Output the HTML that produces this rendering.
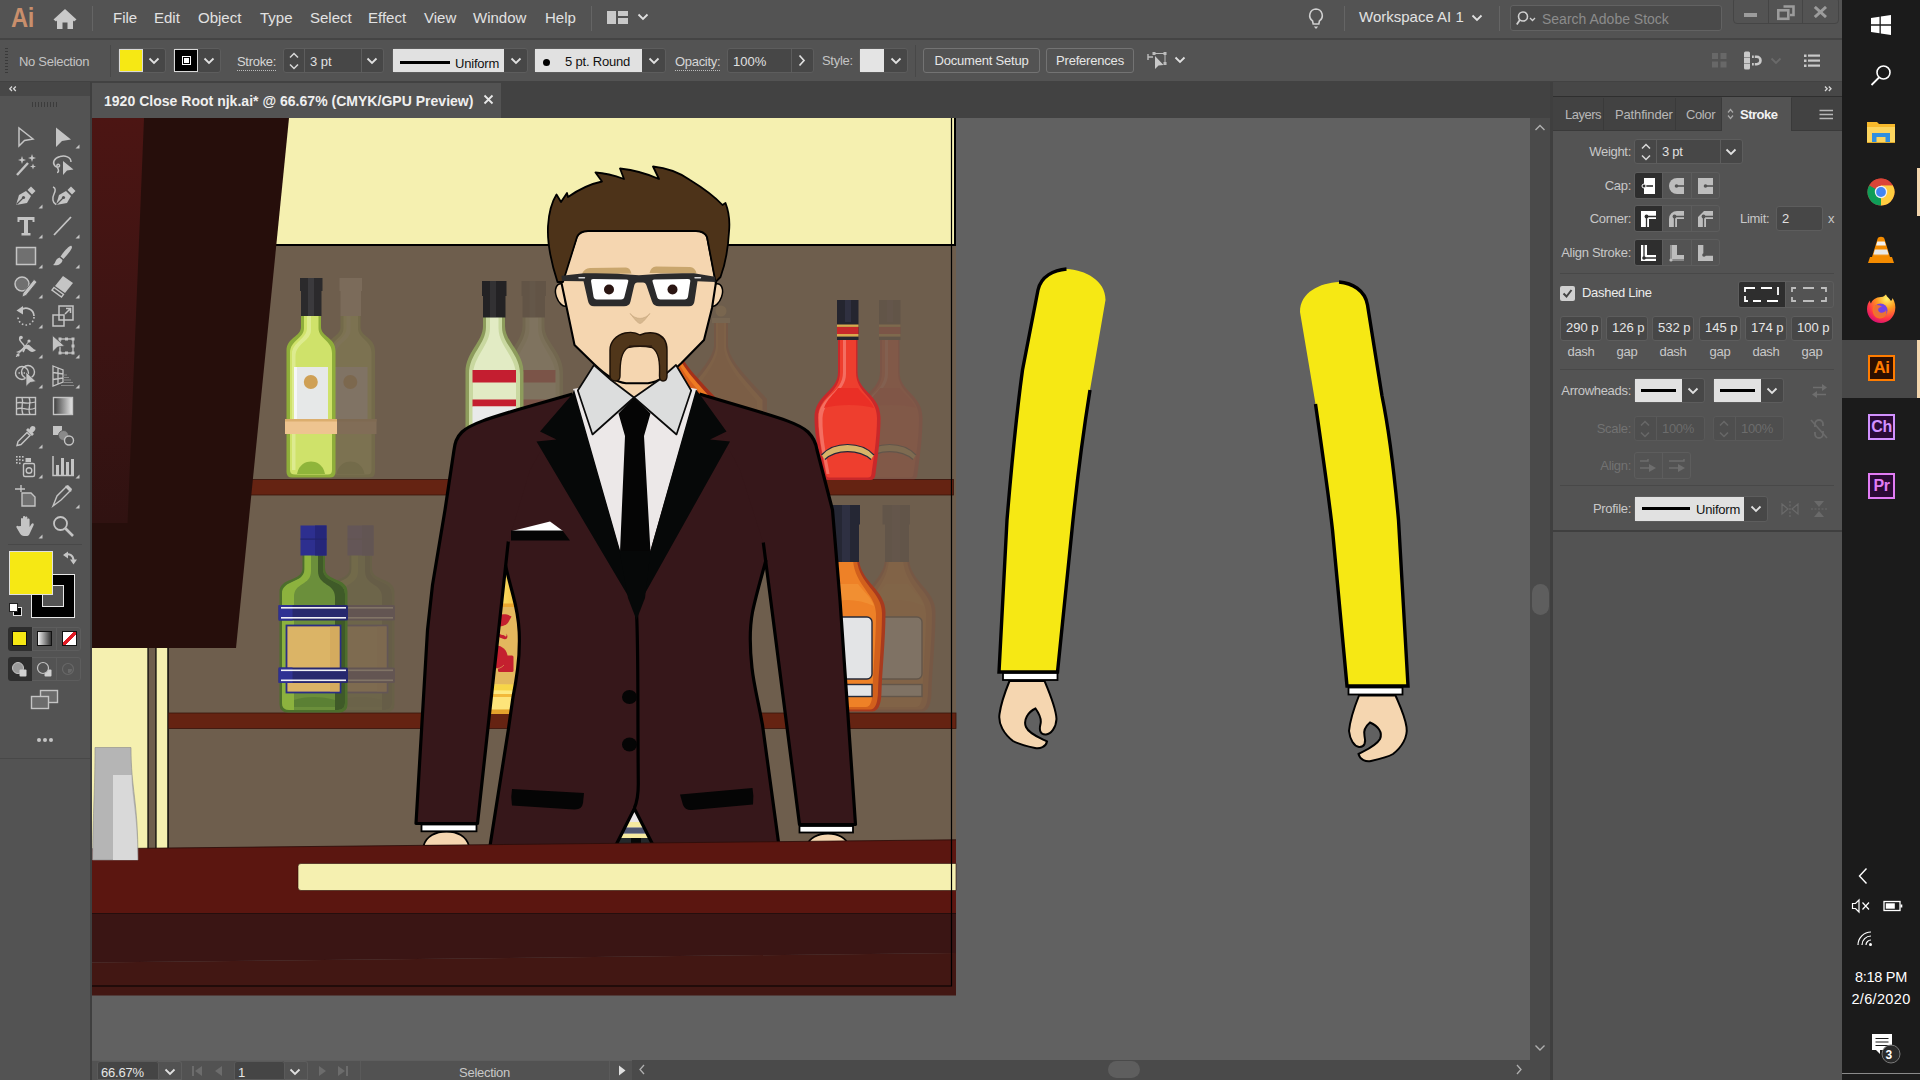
<!DOCTYPE html>
<html><head><meta charset="utf-8"><title>Illustrator</title>
<style>
*{box-sizing:border-box;margin:0;padding:0}
html,body{width:1920px;height:1080px;overflow:hidden;background:#535353;font-family:"Liberation Sans",sans-serif;font-size:13px;color:#dcdcdc}
.abs{position:absolute}
#menubar{position:absolute;left:0;top:0;width:1842px;height:38px;background:#535353}
#menuline{position:absolute;left:0;top:38px;width:1842px;height:2px;background:#444}
#ctrlbar{position:absolute;left:0;top:40px;width:1842px;height:41px;background:#535353}
#tabbar{position:absolute;left:0;top:81px;width:1842px;height:37px;background:#424242}
#ltool{position:absolute;left:0;top:82px;width:90px;height:998px;background:#535353}
#ltoolhead{position:absolute;left:0;top:82px;width:90px;height:14px;background:#474747}
#lgap{position:absolute;left:90px;top:82px;width:2px;height:998px;background:#3f3f3f}
#doctab{position:absolute;left:92px;top:83px;width:409px;height:35px;background:#535353}
#canvas{position:absolute;left:92px;top:118px;width:1438px;height:942px;background:#616161;overflow:hidden}
#vscroll{position:absolute;left:1530px;top:118px;width:20px;height:942px;background:#4a4a4a}
#rgap{position:absolute;left:1550px;top:82px;width:3px;height:998px;background:#3f3f3f}
#rpanel{position:absolute;left:1553px;top:82px;width:289px;height:998px;background:#535353}
#status{position:absolute;left:92px;top:1060px;width:1458px;height:20px;background:#4a4a4a}
#taskbar{position:absolute;left:1842px;top:0;width:78px;height:1080px;background:#1b1b1b}
.mi{position:absolute;top:8px;font-size:15px;color:#e2e2e2;line-height:20px;white-space:nowrap}
.t{position:absolute;white-space:nowrap;line-height:16px}
</style></head><body>
<!--MENUBAR-->
<div id="menubar">
<div class="t" style="left:11px;top:4px;font-size:27px;line-height:28px;font-weight:bold;color:#c98f6c;letter-spacing:-0.5px;transform:scaleX(0.88);transform-origin:0 0">Ai</div>
<svg class="abs" style="left:52px;top:8px" width="26" height="22" viewBox="0 0 26 22"><path d="M13 1 L1.5 11.5 L4 13.5 L5 12.6 V21 H10.5 V14.5 H15.5 V21 H21 V12.6 L22 13.5 L24.5 11.5 Z" fill="#c9c9c9"/></svg>
<div class="abs" style="left:92px;top:6px;width:1px;height:25px;background:#656565"></div>
<div class="mi" id="m1" style="left:113px">File</div>
<div class="mi" id="m2" style="left:154px">Edit</div>
<div class="mi" id="m3" style="left:198px">Object</div>
<div class="mi" id="m4" style="left:260px">Type</div>
<div class="mi" id="m5" style="left:310px">Select</div>
<div class="mi" id="m6" style="left:368px">Effect</div>
<div class="mi" id="m7" style="left:424px">View</div>
<div class="mi" id="m8" style="left:473px">Window</div>
<div class="mi" id="m9" style="left:545px">Help</div>
<div class="abs" style="left:591px;top:6px;width:1px;height:25px;background:#656565"></div>
<svg class="abs" style="left:607px;top:11px" width="22" height="14" viewBox="0 0 22 14"><rect x="0" y="0" width="9" height="13" fill="#c9c9c9"/><rect x="11" y="0" width="10" height="5" fill="#c9c9c9"/><rect x="11" y="7" width="10" height="6" fill="#c9c9c9"/></svg>
<svg class="abs" style="left:637px;top:13px" width="12" height="8" viewBox="0 0 12 8"><path d="M1.5 1.5 L6 6 L10.5 1.5" fill="none" stroke="#e0e0e0" stroke-width="1.8"/></svg>
<svg class="abs" style="left:1307px;top:7px" width="18" height="24" viewBox="0 0 18 24"><path d="M9 2 A6.5 6.5 0 0 0 5.5 13.8 L6.2 17 H11.8 L12.5 13.8 A6.5 6.5 0 0 0 9 2 Z" fill="none" stroke="#d0d0d0" stroke-width="1.6"/><path d="M6.8 19.5 H11.2 L9 22 Z" fill="#d0d0d0"/></svg>
<div class="abs" style="left:1344px;top:6px;width:1px;height:25px;background:#656565"></div>
<div class="mi" id="m10" style="left:1359px;top:7px">Workspace AI 1</div>
<svg class="abs" style="left:1471px;top:14px" width="12" height="8" viewBox="0 0 12 8"><path d="M1.5 1.5 L6 6 L10.5 1.5" fill="none" stroke="#e0e0e0" stroke-width="1.8"/></svg>
<div class="abs" style="left:1499px;top:6px;width:1px;height:25px;background:#656565"></div>
<div class="abs" style="left:1510px;top:5px;width:212px;height:26px;background:#4a4a4a;border:1px solid #626262;border-radius:3px"></div>
<svg class="abs" style="left:1516px;top:10px" width="22" height="16" viewBox="0 0 22 16"><circle cx="7" cy="6.5" r="4.5" fill="none" stroke="#d0d0d0" stroke-width="1.6"/><path d="M3.8 10 L0.8 14.5" stroke="#d0d0d0" stroke-width="1.8"/><path d="M14 8 L16.5 10.5 L19 8" fill="none" stroke="#d0d0d0" stroke-width="1.3"/></svg>
<div class="mi" id="m11" style="left:1542px;top:9px;font-size:14px;color:#8c8c8c">Search Adobe Stock</div>
<div class="abs" style="left:1733px;top:-3px;width:106px;height:27px;border:1px solid #454545;border-radius:4px"></div>
<div class="abs" style="left:1768px;top:0;width:1px;height:23px;background:#454545"></div>
<div class="abs" style="left:1802px;top:0;width:1px;height:23px;background:#454545"></div>
<div class="abs" style="left:1744px;top:13px;width:13px;height:4px;background:#9c9c9c"></div>
<svg class="abs" style="left:1776px;top:4px" width="20" height="17" viewBox="0 0 20 17"><path d="M7.500 2.500 H17.500 V11 H14" fill="none" stroke="#9c9c9c" stroke-width="2.600"/><rect x="2.300" y="6.300" width="10" height="8.500" fill="none" stroke="#9c9c9c" stroke-width="2.600"/></svg>
<svg class="abs" style="left:1813px;top:6px" width="15" height="12" viewBox="0 0 15 12"><path d="M1.800 1 L13 11 M13 1 L1.800 11" stroke="#9c9c9c" stroke-width="3"/></svg>
</div><div id="menuline"></div>
<!--CTRLBAR-->
<div id="ctrlbar">
<style>
#ctrlbar .t{top:14px;color:#c4c4c4;font-size:13px}
.dd{position:absolute;top:8px;height:25px;background:#474747;border:1px solid #5d5d5d;border-radius:3px}
.lt{position:absolute;top:9px;height:23px;background:#e1e1e1}
.btn{position:absolute;top:8px;height:25px;border:1px solid #737373;border-radius:3px;color:#e6e6e6;font-size:13px;line-height:24px;text-align:center;letter-spacing:-0.2px}
</style>
<div class="abs" style="left:5px;top:8px;width:3px;height:25px;background:repeating-linear-gradient(#3a3a3a 0 1px,transparent 1px 3px)"></div>
<div class="t" id="c1" style="left:19px;top:14px;letter-spacing:-0.3px">No Selection</div>
<div class="abs" style="left:110px;top:5px;width:1px;height:32px;background:#484848"></div>
<div class="dd" style="left:118px;width:48px"></div>
<div class="abs" style="left:119px;top:9px;width:24px;height:23px;background:#f6e814;border:1px solid #d8d8d8"></div>
<svg class="abs" style="left:148px;top:17px" width="12" height="8" viewBox="0 0 12 8"><path d="M1.5 1.5 L6 6 L10.5 1.5" fill="none" stroke="#e0e0e0" stroke-width="1.8"/></svg>
<div class="dd" style="left:173px;width:48px"></div>
<div class="abs" style="left:174px;top:9px;width:24px;height:23px;background:#000;border:1px solid #d8d8d8"></div>
<div class="abs" style="left:182px;top:16px;width:9px;height:9px;border:1px solid #fff;background:#000"><div style="position:absolute;left:1px;top:1px;width:5px;height:5px;background:#fff"></div></div>
<svg class="abs" style="left:203px;top:17px" width="12" height="8" viewBox="0 0 12 8"><path d="M1.5 1.5 L6 6 L10.5 1.5" fill="none" stroke="#e0e0e0" stroke-width="1.8"/></svg>
<div class="t" id="c2" style="left:237px;color:#d6d6d6;border-bottom:1px dotted #bbb;line-height:17px;top:13px;letter-spacing:-0.3px">Stroke:</div>
<div class="dd" style="left:283px;width:101px"></div>
<div class="abs" style="left:304px;top:9px;width:1px;height:23px;background:#5d5d5d"></div>
<div class="abs" style="left:361px;top:9px;width:1px;height:23px;background:#5d5d5d"></div>
<svg class="abs" style="left:288px;top:11px" width="12" height="20" viewBox="0 0 12 20"><path d="M2 6.5 L6 2.5 L10 6.5 M2 13.5 L6 17.5 L10 13.5" fill="none" stroke="#d8d8d8" stroke-width="1.5"/></svg>
<div class="t" style="left:310px;color:#e0e0e0">3 pt</div>
<svg class="abs" style="left:366px;top:17px" width="12" height="8" viewBox="0 0 12 8"><path d="M1.5 1.5 L6 6 L10.5 1.5" fill="none" stroke="#e0e0e0" stroke-width="1.8"/></svg>
<div class="dd" style="left:392px;width:136px"></div>
<div class="lt" style="left:393px;width:111px"></div>
<div class="abs" style="left:400px;top:20.5px;width:50px;height:3px;background:#000"></div>
<div class="t" id="c3" style="left:455px;color:#111;top:16px;letter-spacing:-0.2px">Uniform</div>
<svg class="abs" style="left:510px;top:17px" width="12" height="8" viewBox="0 0 12 8"><path d="M1.5 1.5 L6 6 L10.5 1.5" fill="none" stroke="#e0e0e0" stroke-width="1.8"/></svg>
<div class="dd" style="left:534px;width:132px"></div>
<div class="lt" style="left:535px;width:107px"></div>
<div class="abs" style="left:543px;top:19px;width:7px;height:7px;border-radius:50%;background:#000"></div>
<div class="t" id="c4" style="left:565px;color:#111;letter-spacing:-0.2px">5 pt. Round</div>
<svg class="abs" style="left:648px;top:17px" width="12" height="8" viewBox="0 0 12 8"><path d="M1.5 1.5 L6 6 L10.5 1.5" fill="none" stroke="#e0e0e0" stroke-width="1.8"/></svg>
<div class="t" id="c5" style="left:675px;color:#d6d6d6;border-bottom:1px dotted #bbb;line-height:17px;top:13px;letter-spacing:-0.3px">Opacity:</div>
<div class="dd" style="left:727px;width:87px"></div>
<div class="abs" style="left:791px;top:9px;width:1px;height:23px;background:#5d5d5d"></div>
<div class="t" style="left:733px;color:#e0e0e0">100%</div>
<svg class="abs" style="left:798px;top:14px" width="8" height="13" viewBox="0 0 8 13"><path d="M1.5 1.5 L6 6.5 L1.5 11.5" fill="none" stroke="#e0e0e0" stroke-width="1.7"/></svg>
<div class="t" id="c6" style="left:822px;top:13px;letter-spacing:-0.3px">Style:</div>
<div class="dd" style="left:859px;width:49px"></div>
<div class="lt" style="left:860px;width:24px;background:#e4e4e4"></div>
<svg class="abs" style="left:890px;top:17px" width="12" height="8" viewBox="0 0 12 8"><path d="M1.5 1.5 L6 6 L10.5 1.5" fill="none" stroke="#e0e0e0" stroke-width="1.8"/></svg>
<div class="abs" style="left:915px;top:5px;width:1px;height:32px;background:#484848"></div>
<div class="btn" id="c7" style="left:923px;width:117px">Document Setup</div>
<div class="btn" id="c8" style="left:1046px;width:88px">Preferences</div>
<svg class="abs" style="left:1146px;top:9px" width="24" height="22" viewBox="0 0 24 22"><path d="M2 5 V11 M2 8 H7" stroke="#bdbdbd" stroke-width="1.4" fill="none"/><rect x="6.5" y="3" width="3" height="3" fill="#bdbdbd"/><rect x="17.5" y="3" width="3" height="3" fill="#bdbdbd"/><rect x="17.5" y="13" width="3" height="3" fill="#bdbdbd"/><path d="M8 4.5 H19 V14.5" stroke="#bdbdbd" stroke-width="1" fill="none"/><path d="M9 7 L9 20 L12.5 16.5 L17.5 16 Z" fill="#c9c9c9"/></svg>
<svg class="abs" style="left:1174px;top:16px" width="12" height="8" viewBox="0 0 12 8"><path d="M1.5 1.5 L6 6 L10.5 1.5" fill="none" stroke="#e0e0e0" stroke-width="1.8"/></svg>
<svg class="abs" style="left:1711px;top:12px" width="17" height="17" viewBox="0 0 17 17"><g fill="#686868"><rect x="1" y="1" width="6" height="6"/><rect x="9.5" y="1" width="6" height="6"/><rect x="1" y="9.5" width="6" height="6"/><rect x="9.5" y="9.5" width="6" height="6"/></g></svg>
<svg class="abs" style="left:1743px;top:10px" width="21" height="21" viewBox="0 0 21 21"><rect x="1" y="1.500" width="6" height="18" rx="1.500" fill="#c9c9c9"/><rect x="1" y="7" width="6" height="1" fill="#8d8d8d"/><rect x="1" y="13" width="6" height="1" fill="#8d8d8d"/><path d="M9 6.800 H13.800 A3.700 3.700 0 0 1 13.800 14.200 H9" fill="none" stroke="#c9c9c9" stroke-width="2.600"/><rect x="10.800" y="5" width="1" height="11" fill="#535353"/></svg>
<svg class="abs" style="left:1770px;top:17px" width="12" height="8" viewBox="0 0 12 8"><path d="M1.5 1.5 L6 6 L10.5 1.5" fill="none" stroke="#6a6a6a" stroke-width="1.8"/></svg>
<svg class="abs" style="left:1803px;top:13px" width="18" height="15" viewBox="0 0 18 15"><g fill="#c9c9c9"><rect x="1" y="1.5" width="2.5" height="2.5"/><rect x="5" y="1.5" width="12" height="2.2"/><rect x="1" y="6.5" width="2.5" height="2.5"/><rect x="5" y="6.5" width="12" height="2.2"/><rect x="1" y="11.5" width="2.5" height="2.5"/><rect x="5" y="11.5" width="12" height="2.2"/></g></svg>
</div>
<!--TABBAR-->
<div id="tabbar"></div>
<div id="doctab">
<div class="t" id="d1" style="left:12px;top:10px;font-weight:bold;font-size:14px;color:#efefef;letter-spacing:0.02px">1920 Close Root njk.ai* @ 66.67% (CMYK/GPU Preview)</div>
<svg class="abs" style="left:391px;top:11px" width="11" height="11" viewBox="0 0 11 11"><path d="M1.5 1.5 L9.5 9.5 M9.5 1.5 L1.5 9.5" stroke="#e8e8e8" stroke-width="1.8"/></svg>
</div>
<!--CANVAS-->
<div id="canvas"><!--ART0--><svg width="1438" height="942" viewBox="92 118 1438 942" style="position:absolute;left:0;top:0">
<defs>
<linearGradient id="wallg" x1="0" y1="0" x2="0" y2="1"><stop offset="0" stop-color="#4c1513"/><stop offset="0.55" stop-color="#3c1413"/><stop offset="1" stop-color="#301211"/></linearGradient>
<clipPath id="cv"><rect x="92" y="118" width="1438" height="942"/></clipPath>
</defs>
<rect x="92" y="118" width="864" height="730" fill="#6e5e4d"/>
<path d="M275 110 H955 V245 H262 Z" fill="#f5f0b0" stroke="#000" stroke-width="2"/>
<rect x="92" y="640" width="76" height="210" fill="#f5f0b0"/>
<rect x="148" y="640" width="8" height="210" fill="#6e5e4d" stroke="#000" stroke-width="1.200"/>
<path d="M168 640 V850" stroke="#000" stroke-width="1.400"/>
<rect x="245" y="479.500" width="708.500" height="15.500" fill="#652312" stroke="#3a140c" stroke-width="0.800"/>
<rect x="168.500" y="713" width="787.500" height="15.500" fill="#652312" stroke="#3a140c" stroke-width="0.800"/>
<path d="M92 118 H289 L236 648 H92 Z" fill="#260e0b"/>
<path d="M92 118 H144 L127.500 523 H92 Z" fill="url(#wallg)"/>
<g transform="translate(39.5,0)" opacity="0.15"><path d="M301 316 H321 V327 C321 337 335.500 337 335.500 351 V472 Q335.500 477.500 330 477.500 H292 Q286.500 477.500 286.500 472 V351 C286.500 337 301 337 301 327 Z" fill="#8fae3a"/><path d="M304 316 H318.500 V328 C318.500 339 332 340 332 353 V470 Q332 474.500 328 474.500 H295 Q290 474.500 290 470 V353 C290 340 304 339 304 328 Z" fill="#cfe26a"/><path d="M307 316 H311 V330 C311 341 296 343 295.500 356 V470 H292 V354 C292 342 307 339 307 328 Z" fill="#e3efa0" opacity="0.700"/><path d="M297 474 C299 464 306 461.500 311 461.500 C316 461.500 323 464 325 474 Z" fill="#8fb53a"/><rect x="294" y="367" width="34" height="52" fill="#e6e8e8"/><rect x="294" y="367" width="3" height="52" fill="#f6f7f7"/><circle cx="310.800" cy="382" r="7" fill="#cfa055"/><rect x="285" y="419" width="52" height="15" fill="#eec490"/><rect x="285" y="419" width="52" height="2.500" fill="#dcae6e"/><path d="M300 278 H322.500 V291 H321.500 V316 H301 V291 H300 Z" fill="#c8b8a8"/><rect x="308" y="278" width="6" height="38" fill="#c8b8a8"/></g>
<g transform="translate(0,0)" opacity="1"><path d="M301 316 H321 V327 C321 337 335.500 337 335.500 351 V472 Q335.500 477.500 330 477.500 H292 Q286.500 477.500 286.500 472 V351 C286.500 337 301 337 301 327 Z" fill="#8fae3a"/><path d="M304 316 H318.500 V328 C318.500 339 332 340 332 353 V470 Q332 474.500 328 474.500 H295 Q290 474.500 290 470 V353 C290 340 304 339 304 328 Z" fill="#cfe26a"/><path d="M307 316 H311 V330 C311 341 296 343 295.500 356 V470 H292 V354 C292 342 307 339 307 328 Z" fill="#e3efa0" opacity="0.700"/><path d="M297 474 C299 464 306 461.500 311 461.500 C316 461.500 323 464 325 474 Z" fill="#8fb53a"/><rect x="294" y="367" width="34" height="52" fill="#e6e8e8"/><rect x="294" y="367" width="3" height="52" fill="#f6f7f7"/><circle cx="310.800" cy="382" r="7" fill="#cfa055"/><rect x="285" y="419" width="52" height="15" fill="#eec490"/><rect x="285" y="419" width="52" height="2.500" fill="#dcae6e"/><path d="M300 278 H322.500 V291 H321.500 V316 H301 V291 H300 Z" fill="#2b2a2c"/><rect x="308" y="278" width="6" height="38" fill="#3b3a3d"/></g>
<g transform="translate(39.5,0)" opacity="0.15"><path d="M483 317 H505 V326 C505 342 523.500 352 523.500 372 V478 H465.500 V372 C465.500 352 483 342 483 326 Z" fill="#8d9c5c"/><path d="M486 317 H502 V327 C502 344 520 354 520 374 V478 H469 V374 C469 354 486 344 486 327 Z" fill="#c9d8a0"/><path d="M490 317 H498.500 V328 C498.500 346 516 356 516 376 V478 H473 V376 C473 356 490 346 490 328 Z" fill="#e2ebc4"/><rect x="472.500" y="370" width="43.500" height="12.500" fill="#c41e30"/><rect x="472.500" y="399.500" width="43.500" height="7" fill="#c41e30"/><rect x="472.500" y="406.500" width="43.500" height="40" fill="#e9eaea"/><path d="M482 281 H506.500 V296 H505.500 V317.500 H483 V296 H482 Z" fill="#232224"/><rect x="490" y="281" width="6" height="36" fill="#323133"/></g>
<g transform="translate(0,0)" opacity="1"><path d="M483 317 H505 V326 C505 342 523.500 352 523.500 372 V478 H465.500 V372 C465.500 352 483 342 483 326 Z" fill="#8d9c5c"/><path d="M486 317 H502 V327 C502 344 520 354 520 374 V478 H469 V374 C469 354 486 344 486 327 Z" fill="#c9d8a0"/><path d="M490 317 H498.500 V328 C498.500 346 516 356 516 376 V478 H473 V376 C473 356 490 346 490 328 Z" fill="#e2ebc4"/><rect x="472.500" y="370" width="43.500" height="12.500" fill="#c41e30"/><rect x="472.500" y="399.500" width="43.500" height="7" fill="#c41e30"/><rect x="472.500" y="406.500" width="43.500" height="40" fill="#e9eaea"/><path d="M482 281 H506.500 V296 H505.500 V317.500 H483 V296 H482 Z" fill="#232224"/><rect x="490" y="281" width="6" height="36" fill="#323133"/></g>
<g transform="translate(50,0)" opacity="0.12"><path d="M664 322 H678 V346 C680 362 700 380 717 399 V478 H625 V399 C642 380 662 362 664 346 Z" fill="#a3311a"/><path d="M666 322 H676 V347 C678 364 697 382 712.500 400 V478 H629.500 V400 C645 382 664 364 666 347 Z" fill="#ee7a22"/><path d="M668 322 H674 V348 C676 366 693 384 707 401 V478 H635 V401 C649 384 666 366 668 348 Z" fill="#d9601c"/><rect x="662" y="318" width="18" height="5" fill="#b9a27a"/><circle cx="671" cy="311" r="5.500" fill="#c9a55e"/></g>
<g transform="translate(0,0)" opacity="1"><path d="M664 322 H678 V346 C680 362 700 380 717 399 V478 H625 V399 C642 380 662 362 664 346 Z" fill="#a3311a"/><path d="M666 322 H676 V347 C678 364 697 382 712.500 400 V478 H629.500 V400 C645 382 664 364 666 347 Z" fill="#ee7a22"/><path d="M668 322 H674 V348 C676 366 693 384 707 401 V478 H635 V401 C649 384 666 366 668 348 Z" fill="#d9601c"/><rect x="662" y="318" width="18" height="5" fill="#b9a27a"/><circle cx="671" cy="311" r="5.500" fill="#c9a55e"/></g>
<g transform="translate(42,0)" opacity="0.15"><path d="M838 338 H857.500 V372 C857.500 392 880.500 394 880.500 418 C880.500 440 877 462 875.500 474 Q875 480 870 480 H828 Q823.500 480 823 474 C821 462 814.500 440 814.500 418 C814.500 394 838 392 838 372 Z" fill="#c8282a"/><path d="M840 338 H856 V372 C856 394 877 396 877 418 C877 440 873 462 871.500 474 Q871 477.500 868 477.500 H829 Q826.500 477.500 826 474 C824 462 818 440 818 418 C818 396 840 394 840 372 Z" fill="#ee3e2e"/><path d="M843 340 H846 V374 C846 392 824 398 822.500 418 C822 440 828 462 829.500 474 H826.500 C824.500 462 818.500 440 818.500 418 C818.500 396 843 394 843 372 Z" fill="#f4776a" opacity="0.850"/><path d="M824 408 C838 404 860 404 874 408 C870 399 862 394 858 388 H838 C834 394 827 399 824 408 Z" fill="#ea2f26"/><path d="M821.500 455 C834 441 861 441 874 455 L871 459.500 C859 449 836 449 825 459.500 Z" fill="#d8b468"/><path d="M821.500 455 C834 441 861 441 874 455" fill="none" stroke="#23263a" stroke-width="1.200"/><path d="M825 459.500 C836 449 859 449 871 459.500" fill="none" stroke="#23263a" stroke-width="1.200"/><rect x="837" y="300" width="21.500" height="40" fill="#24252f"/><rect x="845" y="300" width="6" height="22" fill="#2f3040"/><rect x="837" y="324.500" width="21.500" height="2.400" fill="#d9a94e"/><rect x="837" y="334" width="21.500" height="2.600" fill="#d9a94e"/><rect x="837" y="327" width="21.500" height="7" fill="#c8282a"/></g>
<g transform="translate(0,0)" opacity="1"><path d="M838 338 H857.500 V372 C857.500 392 880.500 394 880.500 418 C880.500 440 877 462 875.500 474 Q875 480 870 480 H828 Q823.500 480 823 474 C821 462 814.500 440 814.500 418 C814.500 394 838 392 838 372 Z" fill="#c8282a"/><path d="M840 338 H856 V372 C856 394 877 396 877 418 C877 440 873 462 871.500 474 Q871 477.500 868 477.500 H829 Q826.500 477.500 826 474 C824 462 818 440 818 418 C818 396 840 394 840 372 Z" fill="#ee3e2e"/><path d="M843 340 H846 V374 C846 392 824 398 822.500 418 C822 440 828 462 829.500 474 H826.500 C824.500 462 818.500 440 818.500 418 C818.500 396 843 394 843 372 Z" fill="#f4776a" opacity="0.850"/><path d="M824 408 C838 404 860 404 874 408 C870 399 862 394 858 388 H838 C834 394 827 399 824 408 Z" fill="#ea2f26"/><path d="M821.500 455 C834 441 861 441 874 455 L871 459.500 C859 449 836 449 825 459.500 Z" fill="#d8b468"/><path d="M821.500 455 C834 441 861 441 874 455" fill="none" stroke="#23263a" stroke-width="1.200"/><path d="M825 459.500 C836 449 859 449 871 459.500" fill="none" stroke="#23263a" stroke-width="1.200"/><rect x="837" y="300" width="21.500" height="40" fill="#24252f"/><rect x="845" y="300" width="6" height="22" fill="#2f3040"/><rect x="837" y="324.500" width="21.500" height="2.400" fill="#d9a94e"/><rect x="837" y="334" width="21.500" height="2.600" fill="#d9a94e"/><rect x="837" y="327" width="21.500" height="7" fill="#c8282a"/></g>
<g transform="translate(47,0)" opacity="0.15"><path d="M302.500 553 H325 V568 C325 582 347.500 577 347.500 592 V704 Q347.500 712.500 339 712.500 H288 Q279.500 712.500 279.500 704 V592 C279.500 577 302.500 582 302.500 568 Z" fill="#4d6e2c"/><path d="M304.500 553 H323 V569 C323 584 345 579 345 594 V703 Q345 710 338 710 H289 Q282 710 282 703 V594 C282 579 304.500 584 304.500 569 Z" fill="#6b8f3b"/><path d="M304.500 553 H311 V571 C311 586 294 582 294 597 V710 H289 Q282 710 282 703 V594 C282 579 304.500 584 304.500 569 Z" fill="#8cb23e"/><path d="M318 553 H323 V569 C323 584 345 579 345 594 V703 Q345 710 338 710 H335 V597 C335 583 318 586 318 571 Z" fill="#3f5a28"/><path d="M294 700 C305 696 322 696 335 700 V707 H294 Z" fill="#587c33" opacity="0.800"/><rect x="286.500" y="625.500" width="54" height="67" fill="#dbb466" stroke="#2a2d86" stroke-width="1.800"/><rect x="330" y="626.500" width="9.500" height="65" fill="#cfa558" opacity="0.600"/><rect x="278.500" y="605" width="69.500" height="15.500" rx="1.500" fill="#27286e"/><rect x="278.500" y="605" width="14" height="15.500" fill="#2f3193"/><rect x="281" y="607" width="65" height="1.600" fill="#f0f0f4"/><rect x="281" y="617" width="65" height="1.600" fill="#f0f0f4"/><rect x="278.500" y="667.5" width="69.500" height="15.500" rx="1.500" fill="#27286e"/><rect x="278.500" y="667.5" width="14" height="15.500" fill="#2f3193"/><rect x="281" y="669.5" width="65" height="1.600" fill="#f0f0f4"/><rect x="281" y="679.5" width="65" height="1.600" fill="#f0f0f4"/><rect x="300.500" y="525.500" width="26" height="30" fill="#2d2f8f"/><rect x="315" y="525.500" width="11.500" height="30" fill="#25267a"/><rect x="300.500" y="538.500" width="26" height="1.200" fill="#23246c"/></g>
<g transform="translate(0,0)" opacity="1"><path d="M302.500 553 H325 V568 C325 582 347.500 577 347.500 592 V704 Q347.500 712.500 339 712.500 H288 Q279.500 712.500 279.500 704 V592 C279.500 577 302.500 582 302.500 568 Z" fill="#4d6e2c"/><path d="M304.500 553 H323 V569 C323 584 345 579 345 594 V703 Q345 710 338 710 H289 Q282 710 282 703 V594 C282 579 304.500 584 304.500 569 Z" fill="#6b8f3b"/><path d="M304.500 553 H311 V571 C311 586 294 582 294 597 V710 H289 Q282 710 282 703 V594 C282 579 304.500 584 304.500 569 Z" fill="#8cb23e"/><path d="M318 553 H323 V569 C323 584 345 579 345 594 V703 Q345 710 338 710 H335 V597 C335 583 318 586 318 571 Z" fill="#3f5a28"/><path d="M294 700 C305 696 322 696 335 700 V707 H294 Z" fill="#587c33" opacity="0.800"/><rect x="286.500" y="625.500" width="54" height="67" fill="#dbb466" stroke="#2a2d86" stroke-width="1.800"/><rect x="330" y="626.500" width="9.500" height="65" fill="#cfa558" opacity="0.600"/><rect x="278.500" y="605" width="69.500" height="15.500" rx="1.500" fill="#27286e"/><rect x="278.500" y="605" width="14" height="15.500" fill="#2f3193"/><rect x="281" y="607" width="65" height="1.600" fill="#f0f0f4"/><rect x="281" y="617" width="65" height="1.600" fill="#f0f0f4"/><rect x="278.500" y="667.5" width="69.500" height="15.500" rx="1.500" fill="#27286e"/><rect x="278.500" y="667.5" width="14" height="15.500" fill="#2f3193"/><rect x="281" y="669.5" width="65" height="1.600" fill="#f0f0f4"/><rect x="281" y="679.5" width="65" height="1.600" fill="#f0f0f4"/><rect x="300.500" y="525.500" width="26" height="30" fill="#2d2f8f"/><rect x="315" y="525.500" width="11.500" height="30" fill="#25267a"/><rect x="300.500" y="538.500" width="26" height="1.200" fill="#23246c"/></g>
<g transform="translate(50,0)" opacity="0.15"><path d="M835 560 H859 C861 582 885.500 590 885.500 612 C885.500 640 882 672 881.500 692 Q881 711.500 872 711.500 H822 Q813 711.500 812.500 692 C812 672 808.500 640 808.500 612 C808.500 590 833 582 835 560 Z" fill="#a83a1e"/><path d="M837 560 H857 C859 584 882 592 882 613 C882 640 878.500 672 878 692 Q877.500 709.500 870 709.500 H824 Q816.500 709.500 816 692 C815.500 672 812 640 812 613 C812 592 835 584 837 560 Z" fill="#d2601c"/><path d="M839 560 H853 C855 586 876 594 876 614 C876 640 873 672 872.500 692 Q872 707 866 707 H828 Q822 707 821.500 692 C821 672 818 640 818 614 C818 594 837 586 839 560 Z" fill="#ee8127"/><path d="M820 606 C836 598 858 598 874 606 C872 598 862 590 858 584 H836 C832 590 822 598 820 606 Z" fill="#f49a3a" opacity="0.600"/><rect x="822" y="617" width="50" height="62" rx="5" fill="#e3e4e6" stroke="#262a3a" stroke-width="1.400"/><rect x="824" y="684.500" width="48" height="12" fill="#e3e4e6" stroke="#262a3a" stroke-width="1.400"/><path d="M832.500 505 H860 V524.500 H859 V562 H835 V524.500 H832.500 Z" fill="#252734"/><rect x="842" y="505" width="8" height="57" fill="#2e3042"/></g>
<g transform="translate(0,0)" opacity="1"><path d="M835 560 H859 C861 582 885.500 590 885.500 612 C885.500 640 882 672 881.500 692 Q881 711.500 872 711.500 H822 Q813 711.500 812.500 692 C812 672 808.500 640 808.500 612 C808.500 590 833 582 835 560 Z" fill="#a83a1e"/><path d="M837 560 H857 C859 584 882 592 882 613 C882 640 878.500 672 878 692 Q877.500 709.500 870 709.500 H824 Q816.500 709.500 816 692 C815.500 672 812 640 812 613 C812 592 835 584 837 560 Z" fill="#d2601c"/><path d="M839 560 H853 C855 586 876 594 876 614 C876 640 873 672 872.500 692 Q872 707 866 707 H828 Q822 707 821.500 692 C821 672 818 640 818 614 C818 594 837 586 839 560 Z" fill="#ee8127"/><path d="M820 606 C836 598 858 598 874 606 C872 598 862 590 858 584 H836 C832 590 822 598 820 606 Z" fill="#f49a3a" opacity="0.600"/><rect x="822" y="617" width="50" height="62" rx="5" fill="#e3e4e6" stroke="#262a3a" stroke-width="1.400"/><rect x="824" y="684.500" width="48" height="12" fill="#e3e4e6" stroke="#262a3a" stroke-width="1.400"/><path d="M832.500 505 H860 V524.500 H859 V562 H835 V524.500 H832.500 Z" fill="#252734"/><rect x="842" y="505" width="8" height="57" fill="#2e3042"/></g>
<g><defs><linearGradient id="b6g" x1="0" x2="1"><stop offset="0" stop-color="#f5c23a"/><stop offset="0.550" stop-color="#fde56c"/><stop offset="1" stop-color="#f0b93a"/></linearGradient></defs><rect x="470" y="560" width="50" height="154" fill="url(#b6g)"/><rect x="470" y="603.500" width="50" height="4" fill="#e9a630"/><rect x="470" y="607" width="50" height="77.500" fill="#e3b85e"/><path d="M488 626.500 C491 615 504 611.500 511.500 616.500 L508.500 622 C506 626.500 498 627.500 488 626.500 Z" fill="#c4202f"/><path d="M497 631.500 C500 636 503 634 505 636 C506 637.500 507 636 506.500 633.500 C508.500 637 507 640 504 639 C501 638 499 638 497 634 Z" fill="#c4202f"/><circle cx="496" cy="657" r="11.500" fill="#c4202f"/><rect x="498" y="655.500" width="15.500" height="16.500" rx="1.500" fill="#c4202f"/><path d="M486 663 A11 11 0 0 0 504 665" fill="none" stroke="#e3b85e" stroke-width="0.600"/><rect x="470" y="684.500" width="50" height="6" fill="#f7d548"/><rect x="470" y="690.500" width="50" height="3.500" fill="#fde980"/><rect x="470" y="694" width="50" height="3" fill="#f2b93a"/><rect x="470" y="697" width="50" height="12.500" fill="#fde47a"/><rect x="470" y="709.500" width="50" height="4.500" fill="#e5a22c"/></g>
<path d="M423.500 846 C426 836 436 831.500 446.500 831.500 C457 831.500 466.500 836 469 846 Z" fill="#f5d6b0" stroke="#000" stroke-width="1.800"/>
<path d="M806.500 846 C809 838 818 833.500 828 833.500 C838 833.500 846.500 838 849 846 Z" fill="#f5d6b0" stroke="#000" stroke-width="1.800"/>
<rect x="421.500" y="824.500" width="55" height="6.800" fill="#fff" stroke="#000" stroke-width="1.800"/>
<rect x="799.500" y="826" width="53.500" height="6.500" fill="#fff" stroke="#000" stroke-width="1.800"/>
<path d="M572.500 394 L520 409 L507 470 L508.300 542 L505.500 565 C508 577 511 587 513 595 C516 606 518.500 618 519.200 632 C519.800 646 519 658 517.600 669 C516 682 514 692 513 697 L508.300 730 L490 846 L615 846 L634.400 808 L654 846 L779 846 L762.500 725 C758 700 754 686 752 668 C750 650 749.500 628 752.500 612 C756 595 762 575 766 560 L763.300 543 L766 470 L750 409 L699.500 394 Z" fill="#36171a"/><path d="M572.500 394 L520 409 C490 418 470 424 462 432 C456 438 455 443 454 450 L445 510 L432.500 585 L427.500 630 L416 823.500 H477.500 L508.300 542 L530 470 Z" fill="#36171a"/><path d="M699.500 394 L750 409 C780 418 800 424 808 432 C814 438 816 443 817 450 L832.500 510 L840 600 L855.500 824.500 H799.500 L763.300 543 L740 470 Z" fill="#36171a"/>
<path d="M634.400 808 L615 846 H654 Z" fill="#ece8e8"/>
<path d="M627.500 822 H641.300 L644.200 827.400 H624.700 Z" fill="#f6eaa0"/>
<path d="M624.700 827.400 H644.200 L647.400 833.700 H621.500 Z" fill="#4f5672"/>
<path d="M621.500 833.700 H647.400 L649.700 838 H619.300 Z" fill="#f6eaa0"/>
<path d="M619.300 838 H649.700 L654 846 H615 Z" fill="#24282b"/>
<rect x="631" y="838" width="10" height="8" fill="#060808"/>
<path d="M572.500 394 L520 409 C490 418 470 424 462 432 C456 438 455 443 454 450 L445 510 L432.500 585 L427.500 630 L416 823.500 H477.500 L508.300 541.500" fill="none" stroke="#000" stroke-width="3.2" stroke-linejoin="round"/>
<path d="M505.500 565 C508 577 511 587 513 595 C516 606 518.500 618 519.200 632 C519.800 646 519 658 517.600 669 C516 682 514 692 513 697 L508.300 730 L490 846" fill="none" stroke="#000" stroke-width="3.2" stroke-linejoin="round"/>
<path d="M699.500 394 L750 409 C780 418 800 424 808 432 C814 438 816 443 817 450 L832.500 510 L840 600 L855.500 824.500 H799.500 L763.300 542.500" fill="none" stroke="#000" stroke-width="3.2" stroke-linejoin="round"/>
<path d="M766 560 C762 575 756 595 752.500 612 C749.500 628 750 650 752 668 C754 686 758 700 762.500 725 L779 846" fill="none" stroke="#000" stroke-width="3.2" stroke-linejoin="round"/>
<path d="M615.500 846 L634.400 808.500 L653.500 846" fill="none" stroke="#000" stroke-width="3.2" stroke-linejoin="round"/>
<path d="M636.500 612 C638.500 650 637.500 700 638.300 784 C638.300 796 637 802 634.400 808" fill="none" stroke="#000" stroke-width="3.2"/>
<ellipse cx="629.500" cy="697" rx="7.500" ry="7" fill="#050505"/>
<ellipse cx="629.500" cy="744.500" rx="7.500" ry="7" fill="#050505"/>
<path d="M512 789 L584 793 L583 803 Q582 810 574 809.500 L512 805.500 Q510.500 797 512 789 Z" fill="#050505"/>
<path d="M752.500 788 L680 794.500 L683 805 Q685 810.500 692 810 L753 804.500 Q754 796 752.500 788 Z" fill="#050505"/>
<path d="M512 531 L550 521.500 L563 531 Z" fill="#fff"/>
<path d="M511 530.500 H562.500 L570 540.500 H511 Z" fill="#050505"/>
<path d="M573 389 L620 552 L650 552 L697 389 L634 378 Z" fill="#ece8e8"/>
<path d="M634 397 L650.500 413.500 L644 436 L650.500 552 L636 600 L620 552 L625 436 L618.500 413.500 Z" fill="#050505"/>
<path d="M572.500 394 L540 431.500 L556.500 439.500 L536.500 441.500 L634 606 L620.500 552 L574 389.500 Z" fill="#060808"/>
<path d="M699.500 394 L726.500 431.500 L710 439.500 L730 441.500 L638 606 L650 552 L696 389.500 Z" fill="#060808"/>
<path d="M619.500 551 L650.500 551 L645 598 L636.500 620 L628 598 Z" fill="#060808"/>
<path d="M606 360 H664 V385 L634 398 L606 385 Z" fill="#f5d6b0"/>
<path d="M563 284 C556 282 554 290 556.500 297 C558.500 303 563 307 566 306 Z" fill="#f5d6b0" stroke="#000" stroke-width="1.500"/>
<path d="M715 284 C722 282 724 290 721.500 297 C719.500 303 715 307 712 306 Z" fill="#f5d6b0" stroke="#000" stroke-width="1.500"/>
<path d="M577 236 Q580 231 588 231 H696 Q704 231 707 236 L716 282 L712 308 L704 340 L681 363.500 Q662 381.500 648 383.300 H626 Q612 381.500 594 364 L574.500 345 L569.500 321 L561.500 283 Z" fill="#f5d6b0" stroke="#000" stroke-width="2.100" stroke-linejoin="round"/>
<path d="M557.500 282 C551 262 547 245 548 226 C549 210 553 200 556.500 194.500 L561 202 L567 193 L568 197 C578 190 590 184 602 181.500 L595.500 172.500 C606 173 616 176 624 179 L620 168.500 C633 170 648 174 659 179 L653 166.500 C668 168 680 173 690 180 C703 188 715 197 722.500 205 L725.500 203 C729 212 730 222 729 232 C728 250 725 265 720.500 277 L715.500 282 L707 237 Q704 231 696 231 H588 Q580 231 577 237 L563 282 Z" fill="#4d3319" stroke="#000" stroke-width="1.800" stroke-linejoin="round"/>
<path d="M582 274.500 Q584 268 590 268 L626 267.500 Q630 267.500 631.500 273.500 Z" fill="#c9a66d"/>
<path d="M649.500 273 Q651 266.500 656 266.500 L690 267 Q695 267 696.500 273.500 Z" fill="#c9a66d"/>
<path d="M561.500 275.800 L584 273.300 Q612 272.600 639 275.300 Q666 272.600 694 273.300 L715 276.800 L715.500 282 L697.500 281.300 L694.500 301 Q694 306.300 689 306.300 L659 306.300 Q653.500 306.300 652 301.500 L646.500 285.500 Q645.500 282.500 643 282.500 L637.500 282.500 Q635 282.500 634.200 285.500 L630.500 301.500 Q629.500 306.300 624 306.300 L594 306.300 Q589 306.300 588 301 L583.500 281.300 L562 281 Z" fill="#2b2b2c"/>
<path d="M591 281 Q590.800 279 593 279 L626.500 279.500 Q628.800 279.500 628.200 281.800 L624.500 296.500 Q624 299.500 621 299.500 L597 299.500 Q594 299.500 593.500 296.500 Z" fill="#fff"/>
<path d="M652.600 281.800 Q652 279.500 654.300 279.500 L688 279 Q690.500 279 690.300 281.200 L688 296.500 Q687.500 299.500 684.500 299.500 L660.500 299.500 Q657.500 299.500 657 296.500 Z" fill="#fff"/>
<circle cx="609" cy="289.500" r="5" fill="#2a1512"/><circle cx="672.500" cy="289.500" r="5" fill="#2a1512"/>
<path d="M579 277.800 H584.500 M695 277.800 H700.500" stroke="#d8d8d8" stroke-width="1.400" stroke-linecap="round"/>
<path d="M630 313.500 C636 320 644 320 650 313.500 C646 318 643 323 640 323.500 C637 323 634 318 630 313.500 Z" fill="#d6b78e" stroke="#c4a47c" stroke-width="0.600"/>
<path d="M594 365 L577.800 390.500 L592.500 434.500 L634 397.500 L611 380 Z" fill="#dcdddd" stroke="#0a0a0a" stroke-width="1.700" stroke-linejoin="round"/>
<path d="M676 365 L691.200 390.500 L676.500 434.500 L634 397.500 L659 380 Z" fill="#dcdddd" stroke="#0a0a0a" stroke-width="1.700" stroke-linejoin="round"/>
<path d="M625 333 Q634 331 640 335 Q648 331.500 656 333.500 C664 336 667 342 667 350 V376 Q667 381 663 381 Q659.500 381 659.500 376 C660 362 659 352 652 347.500 Q640 345 628 347.500 C621 352 620 362 620 376 Q620 381 615.500 381 Q610.500 381 610 376 V350 C610 342 616 335 625 333 Z" fill="#50361a" stroke="#1a0f06" stroke-width="1.400"/>
<path d="M629 346 H652" stroke="#2a1a10" stroke-width="1.200"/>
<path d="M92 848.800 L956 839.800 V913.500 H92 Z" fill="#5b1610"/>
<path d="M92 848.800 L956 839.800" stroke="#2a0c09" stroke-width="0.800"/>
<path d="M301 863.500 H956 V890.500 H301 Q298 890.500 298 887.500 V866.500 Q298 863.500 301 863.500 Z" fill="#f5f0b0" stroke="#2a0c09" stroke-width="0.600"/>
<path d="M92 913.500 H956 V953 L92 962.500 Z" fill="#3a1514"/>
<path d="M92 962.500 L956 953 V995.500 H92 Z" fill="#421713"/>
<path d="M92 913.500 H956" stroke="#1c0807" stroke-width="0.800"/>
<path d="M95 747.500 H131 C131 790 138 800 138 860 H92.500 C93 810 95 790 95 747.500 Z" fill="#b5b5b5" stroke="#8a8a8a" stroke-width="0.600"/>
<path d="M113 775 H131.500 C132 800 137.500 815 137.500 860 H113 Z" fill="#d9d9d9"/>
<path d="M951.500 118 V986 H92" fill="none" stroke="#000" stroke-width="1.200"/>
<path d="M1066.500 269 C1085 270 1105.500 280 1105.500 300 L1090 390 C1082 440 1076 490 1072 530 L1057.500 672 H999 L1007 520 C1012 460 1017 410 1022.500 370 L1038 290 C1041 276 1054 270 1066.500 269 Z" fill="#f6e814"/>
<path d="M1066.500 269 C1054 270 1041 276 1038 290 L1022.500 370 C1017 410 1012 460 1007 520 L999 672 H1057.500 L1072 530 C1076 490 1082 440 1090 390" fill="none" stroke="#000" stroke-width="3.400"/>
<rect x="1003" y="673" width="54.500" height="7" fill="#fff" stroke="#000" stroke-width="1.800"/>
<path d="M1009.500 681 H1044.500 C1050 694 1056 708 1056.500 719 C1056 728 1051 734 1046 734.500 C1040 735 1039 730 1040.500 724 C1042 718 1038 712 1035.500 708.500 C1028 712 1023 720 1026 727 C1029 734 1040 738 1047 741.500 C1046 747 1040 749 1035 748 C1026 746 1018 744 1013 741 C1004 734 998 724 999.500 714 C1001 703 1005 692 1009.500 681 Z" fill="#f5d6b0" stroke="#000" stroke-width="2"/>
<path d="M1339 282 C1320 283 1300 292 1300 312 L1315.500 404 C1322 450 1328 490 1332.500 530 L1347 686 H1408 L1398.500 520 C1394 470 1389 430 1382 396 L1367.500 305 C1365 290 1352 283 1339 282 Z" fill="#f6e814"/>
<path d="M1339 282 C1352 283 1365 290 1367.500 305 L1382 396 C1389 430 1394 470 1398.500 520 L1408 686 H1347 L1332.500 530 C1328 490 1322 450 1315.500 404" fill="none" stroke="#000" stroke-width="3.400"/>
<rect x="1348.500" y="687.500" width="54" height="7" fill="#fff" stroke="#000" stroke-width="1.800"/>
<path d="M1395.500 695.500 H1359 C1354 708 1350 720 1349 731 C1350 740 1354 746 1359 747 C1365 747.500 1366 742 1364.500 736 C1363 730 1367 725 1370 722.500 C1378 726 1383 732 1380 739 C1376 746 1366 750 1358.500 754 C1360 760 1366 762 1371 761 C1380 759 1388 757 1393 754 C1402 747 1408 737 1406.500 727 C1405 716 1400 706 1395.500 695.500 Z" fill="#f5d6b0" stroke="#000" stroke-width="2"/>
</svg><!--ART1--></div>
<div id="vscroll">
<svg class="abs" style="left:4px;top:6px" width="12" height="8" viewBox="0 0 12 8"><path d="M1.500 6 L6 1.500 L10.500 6" fill="none" stroke="#b0b0b0" stroke-width="1.400"/></svg>
<svg class="abs" style="left:4px;top:926px" width="12" height="8" viewBox="0 0 12 8"><path d="M1.500 1.500 L6 6 L10.500 1.500" fill="none" stroke="#b0b0b0" stroke-width="1.400"/></svg>
<div class="abs" style="left:2px;top:466px;width:17px;height:31px;border-radius:9px;background:#5e5e5e"></div>
</div>
<div id="status">
<div class="abs" style="left:0;top:0;width:540px;height:20px;background:#525252"></div>
<div class="abs" style="left:0;top:0;width:540px;height:1px;background:#5e5e5e"></div>
<div class="abs" style="left:66px;top:1px;width:24px;height:19px;border:1px solid #5e5e5e;border-left:none;border-radius:0 3px 0 0"></div>
<div class="abs" style="left:192px;top:1px;width:24px;height:19px;border:1px solid #5e5e5e;border-left:none;border-radius:0 3px 0 0"></div>
<div class="abs" style="left:5px;top:1px;width:62px;height:19px;background:#454545;border:1px solid #5a5a5a;border-radius:3px 3px 0 0"></div>
<div class="t" style="left:9px;top:5px;color:#e6e6e6;font-size:13px;letter-spacing:-0.200px">66.67%</div>
<svg class="abs" style="left:72px;top:8px" width="12" height="8" viewBox="0 0 12 8"><path d="M1.500 1.500 L6 6 L10.500 1.500" fill="none" stroke="#e0e0e0" stroke-width="1.800"/></svg>
<svg class="abs" style="left:100px;top:5px" width="42" height="12" viewBox="0 0 42 12"><g fill="#6c6c6c"><rect x="0" y="1" width="2" height="10"/><path d="M10 1 L3 6 L10 11 Z"/><path d="M30 1 L23 6 L30 11 Z"/></g></svg>
<div class="abs" style="left:142px;top:1px;width:51px;height:19px;background:#454545;border:1px solid #5a5a5a;border-radius:3px 3px 0 0"></div>
<div class="t" style="left:146px;top:5px;color:#e6e6e6;font-size:13px">1</div>
<svg class="abs" style="left:197px;top:8px" width="12" height="8" viewBox="0 0 12 8"><path d="M1.500 1.500 L6 6 L10.500 1.500" fill="none" stroke="#e0e0e0" stroke-width="1.800"/></svg>
<svg class="abs" style="left:226px;top:5px" width="34" height="12" viewBox="0 0 34 12"><g fill="#6c6c6c"><path d="M1 1 L8 6 L1 11 Z"/><path d="M20 1 L27 6 L20 11 Z"/><rect x="28" y="1" width="2" height="10"/></g></svg>
<div class="abs" style="left:268px;top:1px;width:1px;height:19px;background:#5a5a5a"></div>
<div class="t" style="left:268px;width:249px;text-align:center;top:5px;color:#c8c8c8;font-size:13px;letter-spacing:-0.300px">Selection</div>
<div class="abs" style="left:517px;top:1px;width:1px;height:19px;background:#5a5a5a"></div>
<svg class="abs" style="left:526px;top:5px" width="8" height="11" viewBox="0 0 8 11"><path d="M1 0.500 L7.500 5.500 L1 10.500 Z" fill="#e0e0e0"/></svg>
<div class="abs" style="left:540px;top:0;width:898px;height:20px;background:#4a4a4a"></div>
<svg class="abs" style="left:546px;top:4px" width="8" height="11" viewBox="0 0 8 11"><path d="M6 1 L2 5.500 L6 10" fill="none" stroke="#b0b0b0" stroke-width="1.300"/></svg>
<svg class="abs" style="left:1423px;top:4px" width="8" height="11" viewBox="0 0 8 11"><path d="M2 1 L6 5.500 L2 10" fill="none" stroke="#b0b0b0" stroke-width="1.300"/></svg>
<div class="abs" style="left:1016px;top:1px;width:32px;height:17px;border-radius:9px;background:#5e5e5e"></div>
</div>
<!--LTOOL-->
<!--LT0--><div id="ltool">
<svg class="abs" style="left:13px;top:41px;overflow:visible" width="26" height="26" viewBox="0 0 26 26"><path d="M6 5 L6 23 L11.5 17.5 L20 16 Z" fill="none" stroke="#c4c4c4" stroke-width="1.5" stroke-linejoin="miter"/></svg>
<svg class="abs" style="left:50px;top:41px;overflow:visible" width="26" height="26" viewBox="0 0 26 26"><path d="M6 4.5 L6 24 L12 18 L21 16.5 Z" fill="#c4c4c4"/><path d="M29.5 21.5 V25.5 H25.5 Z" fill="#c4c4c4"/></svg>
<svg class="abs" style="left:13px;top:71px;overflow:visible" width="26" height="26" viewBox="0 0 26 26"><path d="M4 22 L15 10" stroke="#c4c4c4" stroke-width="2.4"/><path d="M9 3 L10 6 L13 7 L10 8 L9 11 L8 8 L5 7 L8 6 Z M19 1 L20 4 L23 5 L20 6 L19 9 L18 6 L15 5 L18 4 Z M20 10.5 L20.8 12.7 L23 13.5 L20.8 14.3 L20 16.5 L19.2 14.3 L17 13.5 L19.2 12.7 Z" fill="#c4c4c4"/></svg>
<svg class="abs" style="left:50px;top:71px;overflow:visible" width="26" height="26" viewBox="0 0 26 26"><path d="M21 9 C21 4 15 2 10 3.5 C4 5 2 10 5 13 C6.5 14.5 9 14.5 9.5 13 C10 11.5 8 10.5 7 12 C6 13.5 8.5 15.5 8.5 17.5 C8.5 19 7.5 19.5 7 19.5" fill="none" stroke="#c4c4c4" stroke-width="1.5"/><path d="M13 8 L13 22 L17 17.5 L23.5 16.5 Z" fill="#c4c4c4"/></svg>
<svg class="abs" style="left:13px;top:101px;overflow:visible" width="26" height="26" viewBox="0 0 26 26"><g transform="translate(0,0)"><path d="M3 22 L6 12 L13 8 L18 13 L14 20 Z" fill="#c4c4c4"/><path d="M3.5 21.5 L10 15" stroke="#535353" stroke-width="1.3"/><circle cx="10.5" cy="14.5" r="1.6" fill="#535353"/><path d="M14.5 7 L18 3.5 L22.5 8 L19 11.5 Z" fill="#c4c4c4"/></g><path d="M29.5 21.5 V25.5 H25.5 Z" fill="#c4c4c4"/></svg>
<svg class="abs" style="left:50px;top:101px;overflow:visible" width="26" height="26" viewBox="0 0 26 26"><path d="M3 4 C6 5 5.5 8 4 11 C2 15 2.5 20 6 21.5" fill="none" stroke="#c4c4c4" stroke-width="1.5"/><g transform="translate(3,0)"><path d="M3 22 L6 12 L13 8 L18 13 L14 20 Z" fill="#c4c4c4"/><path d="M3.5 21.5 L10 15" stroke="#535353" stroke-width="1.3"/><circle cx="10.5" cy="14.5" r="1.6" fill="#535353"/><path d="M14.5 7 L18 3.5 L22.5 8 L19 11.5 Z" fill="#c4c4c4"/></g></svg>
<svg class="abs" style="left:13px;top:131px;overflow:visible" width="26" height="26" viewBox="0 0 26 26"><path d="M4.5 4 H21.5 V9 H19.5 V7 H15 V20 H17.5 V22.5 H8.5 V20 H11 V7 H6.5 V9 H4.5 Z" fill="#c4c4c4"/><path d="M29.5 21.5 V25.5 H25.5 Z" fill="#c4c4c4"/></svg>
<svg class="abs" style="left:50px;top:131px;overflow:visible" width="26" height="26" viewBox="0 0 26 26"><path d="M4 22 L21 4" stroke="#c4c4c4" stroke-width="1.8"/><path d="M29.5 21.5 V25.5 H25.5 Z" fill="#c4c4c4"/></svg>
<svg class="abs" style="left:13px;top:161px;overflow:visible" width="26" height="26" viewBox="0 0 26 26"><rect x="3.5" y="4.5" width="19" height="17" fill="#707070" stroke="#c4c4c4" stroke-width="1.5"/><path d="M29.5 21.5 V25.5 H25.5 Z" fill="#c4c4c4"/></svg>
<svg class="abs" style="left:50px;top:161px;overflow:visible" width="26" height="26" viewBox="0 0 26 26"><path d="M21.5 3 C23 4 21 8 13.5 16 L10.5 13.5 C16 6 20 2 21.5 3 Z" fill="#c4c4c4"/><path d="M9.5 14.5 L12.5 17 C12 21 8 23 3 22 C6 20 5 16 9.5 14.5 Z" fill="#c4c4c4"/><path d="M29.5 21.5 V25.5 H25.5 Z" fill="#c4c4c4"/></svg>
<svg class="abs" style="left:13px;top:191px;overflow:visible" width="26" height="26" viewBox="0 0 26 26"><circle cx="9" cy="11" r="7" fill="#707070" stroke="#c4c4c4" stroke-width="1.5"/><path d="M10 20 L21 6.5 L24 9 L13 22.5 L9 24 Z" fill="#c4c4c4" stroke="#535353" stroke-width="0.8"/><path d="M29.5 21.5 V25.5 H25.5 Z" fill="#c4c4c4"/></svg>
<svg class="abs" style="left:50px;top:191px;overflow:visible" width="26" height="26" viewBox="0 0 26 26"><path d="M13 3 L23 10 L15 20 L5 13 Z" fill="#c4c4c4"/><path d="M4 14.5 L13.5 21.5 L11.5 24 L2 17 Z" fill="none" stroke="#c4c4c4" stroke-width="1.4"/><path d="M29.5 21.5 V25.5 H25.5 Z" fill="#c4c4c4"/></svg>
<svg class="abs" style="left:13px;top:221px;overflow:visible" width="26" height="26" viewBox="0 0 26 26"><path d="M8 7 A8 8 0 0 1 21 13" fill="none" stroke="#c4c4c4" stroke-width="1.7"/><path d="M3.5 7.5 L10 3 L10 11.5 Z" fill="#c4c4c4"/><path d="M21 14 A8 8 0 0 1 5 14" fill="none" stroke="#c4c4c4" stroke-width="1.6" stroke-dasharray="1.6 2.2"/><path d="M29.5 21.5 V25.5 H25.5 Z" fill="#c4c4c4"/></svg>
<svg class="abs" style="left:50px;top:221px;overflow:visible" width="26" height="26" viewBox="0 0 26 26"><rect x="9" y="3" width="14" height="14" fill="none" stroke="#c4c4c4" stroke-width="1.5"/><rect x="3" y="12" width="11" height="11" fill="none" stroke="#c4c4c4" stroke-width="1.5"/><path d="M15 11 L20 6 M16 5.5 H20.5 V10" stroke="#c4c4c4" stroke-width="1.5" fill="none"/><path d="M29.5 21.5 V25.5 H25.5 Z" fill="#c4c4c4"/></svg>
<svg class="abs" style="left:13px;top:251px;overflow:visible" width="26" height="26" viewBox="0 0 26 26"><path d="M3 19 C8 22 11 14 14 16 C17 18 19 21 23 17 C21 17 19 14 16 12 C12 10 10 17 3 19 Z" fill="#c4c4c4"/><path d="M8 4 C5 6 8 9 10 11 C12 13 12 16 10 19" fill="none" stroke="#c4c4c4" stroke-width="1.6"/><circle cx="8" cy="4.5" r="1.8" fill="#c4c4c4"/><circle cx="16" cy="8" r="1.6" fill="#c4c4c4"/><circle cx="5" cy="22" r="1.6" fill="#c4c4c4"/><path d="M3 24 L17 7" stroke="#c4c4c4" stroke-width="1"/><path d="M29.5 21.5 V25.5 H25.5 Z" fill="#c4c4c4"/></svg>
<svg class="abs" style="left:50px;top:251px;overflow:visible" width="26" height="26" viewBox="0 0 26 26"><rect x="10" y="6" width="13" height="14" fill="none" stroke="#c4c4c4" stroke-width="1.3"/><g fill="#c4c4c4"><rect x="8.5" y="4.5" width="3" height="3"/><rect x="21.500" y="4.5" width="3" height="3"/><rect x="8.5" y="18.5" width="3" height="3"/><rect x="21.5" y="18.5" width="3" height="3"/><rect x="15" y="4.5" width="3" height="3"/><rect x="15" y="18.5" width="3" height="3"/><rect x="21.5" y="11.5" width="3" height="3"/></g><path d="M2.5 2.500 L2.5 19 L7.5 14 L14.500 13 Z" fill="#c4c4c4" stroke="#535353" stroke-width="0.7"/><path d="M29.5 21.5 V25.5 H25.5 Z" fill="#c4c4c4"/></svg>
<svg class="abs" style="left:13px;top:281px;overflow:visible" width="26" height="26" viewBox="0 0 26 26"><circle cx="9" cy="10" r="6.5" fill="none" stroke="#c4c4c4" stroke-width="1.4"/><circle cx="15" cy="9" r="6.5" fill="none" stroke="#c4c4c4" stroke-width="1.4"/><path d="M5.5 10 H12" stroke="#c4c4c4" stroke-width="1.6" stroke-dasharray="1.4 1.2"/><path d="M13 9 L13 23.500 L17 19.500 L23 18.500 Z" fill="#c4c4c4" stroke="#535353" stroke-width="0.7"/><path d="M29.5 21.5 V25.5 H25.5 Z" fill="#c4c4c4"/></svg>
<svg class="abs" style="left:50px;top:281px;overflow:visible" width="26" height="26" viewBox="0 0 26 26"><path d="M3 3 L13 7 V19 L3 23 Z M8 5 V21 M3 9.500 L13 11 M3 16.500 L13 15" fill="none" stroke="#c4c4c4" stroke-width="1.3"/><path d="M13 12 H17 M13 14.500 H19 M13 17 H21 M13 19.500 H23 M11 22.500 H24" stroke="#8a8a8a" stroke-width="1.2"/><path d="M29.5 21.5 V25.5 H25.5 Z" fill="#c4c4c4"/></svg>
<svg class="abs" style="left:13px;top:311px;overflow:visible" width="26" height="26" viewBox="0 0 26 26"><rect x="3.500" y="4.500" width="19" height="17" fill="none" stroke="#c4c4c4" stroke-width="1.4"/><path d="M3.500 10 C9 8 12 12 22.500 9 M3.500 16 C9 13 14 19 22.500 15 M9 4.500 C11 10 7 15 10 21.500 M16 4.500 C19 10 14 15 17 21.500" fill="none" stroke="#c4c4c4" stroke-width="1.3"/></svg>
<svg class="abs" style="left:50px;top:311px;overflow:visible" width="26" height="26" viewBox="0 0 26 26"><defs><linearGradient id="tg" x1="0" x2="1"><stop offset="0" stop-color="#3a3a3a"/><stop offset="1" stop-color="#e8e8e8"/></linearGradient></defs><rect x="3.500" y="4.500" width="19" height="17" fill="url(#tg)" stroke="#c4c4c4" stroke-width="1.4"/></svg>
<svg class="abs" style="left:13px;top:341px;overflow:visible" width="26" height="26" viewBox="0 0 26 26"><path d="M4 22.500 L5 18.500 L14 9.500 L17 12.500 L8 21.500 Z" fill="none" stroke="#c4c4c4" stroke-width="1.4"/><path d="M13 7 L15 5 L16.500 6.500 C17 4 19 2 21.500 3.500 C23.500 5.500 22 8 19.500 9.500 L21 11 L19 13 Z" fill="#c4c4c4"/><path d="M29.5 21.5 V25.5 H25.5 Z" fill="#c4c4c4"/></svg>
<svg class="abs" style="left:50px;top:341px;overflow:visible" width="26" height="26" viewBox="0 0 26 26"><rect x="3" y="3" width="9" height="9" fill="#c4c4c4"/><circle cx="13.500" cy="12.500" r="5" fill="#8a8a8a" stroke="#535353" stroke-width="0.8"/><circle cx="19" cy="17.500" r="4.500" fill="#535353" stroke="#c4c4c4" stroke-width="1.4"/></svg>
<svg class="abs" style="left:13px;top:371px;overflow:visible" width="26" height="26" viewBox="0 0 26 26"><rect x="10.500" y="10.500" width="11" height="13" rx="1.500" fill="none" stroke="#c4c4c4" stroke-width="1.400"/><rect x="12.500" y="5" width="5.500" height="4" fill="#c4c4c4"/><circle cx="16" cy="17.500" r="2.800" fill="none" stroke="#c4c4c4" stroke-width="1.400"/><g fill="#c4c4c4"><rect x="3" y="3" width="1.600" height="1.600"/><rect x="6" y="3" width="1.600" height="1.600"/><rect x="9" y="3" width="1.600" height="1.600"/><rect x="3" y="6" width="1.600" height="1.600"/><rect x="6" y="6" width="1.600" height="1.600"/><rect x="9" y="6.500" width="1.600" height="1.600"/><rect x="3" y="9" width="1.600" height="1.600"/><rect x="6" y="9.500" width="1.600" height="1.600"/></g><path d="M29.5 21.5 V25.5 H25.5 Z" fill="#c4c4c4"/></svg>
<svg class="abs" style="left:50px;top:371px;overflow:visible" width="26" height="26" viewBox="0 0 26 26"><path d="M3 3 V22.500 H24" fill="none" stroke="#c4c4c4" stroke-width="1.500"/><g fill="#c4c4c4"><rect x="6" y="12" width="3" height="10"/><rect x="11" y="5" width="3" height="17"/><rect x="16" y="9" width="3" height="13"/><rect x="21" y="6" width="3" height="16"/></g><path d="M29.5 21.5 V25.5 H25.5 Z" fill="#c4c4c4"/></svg>
<svg class="abs" style="left:13px;top:401px;overflow:visible" width="26" height="26" viewBox="0 0 26 26"><path d="M8 2 V9 M2 6 H12" stroke="#c4c4c4" stroke-width="1.400" fill="none"/><path d="M9 10 H18 L22 14 V23 H9 Z" fill="#707070" stroke="#c4c4c4" stroke-width="1.400"/></svg>
<svg class="abs" style="left:50px;top:401px;overflow:visible" width="26" height="26" viewBox="0 0 26 26"><path d="M3 23 L7 13 L16 4 L20 8 L11 17 Z" fill="none" stroke="#c4c4c4" stroke-width="1.400"/><path d="M15 3 L18 2 L22 6 L21 9 Z" fill="#c4c4c4"/><path d="M29.5 21.5 V25.5 H25.5 Z" fill="#c4c4c4"/></svg>
<svg class="abs" style="left:13px;top:431px;overflow:visible" width="26" height="26" viewBox="0 0 26 26"><path d="M8 13 V6 C8 4.500 10 4.500 10 6 V11 V4 C10 2.500 12.200 2.500 12.200 4 V11 V4.500 C12.200 3 14.400 3 14.400 4.500 V11.500 V6.500 C14.400 5 16.600 5 16.600 6.500 V14 L18.500 11 C19.500 9.500 21.500 10.500 20.500 12.500 L16.500 21 C16 22.500 15 23 13 23 H11 C9 23 8 22 7 20.500 L3.500 14.500 C2.800 13 4.500 12 5.500 13.200 Z" fill="#c4c4c4"/><path d="M29.5 21.5 V25.5 H25.5 Z" fill="#c4c4c4"/></svg>
<svg class="abs" style="left:50px;top:431px;overflow:visible" width="26" height="26" viewBox="0 0 26 26"><circle cx="10.500" cy="10.500" r="6.500" fill="none" stroke="#c4c4c4" stroke-width="1.800"/><path d="M15.500 15.500 L23 23" stroke="#c4c4c4" stroke-width="2.600"/></svg>
<div class="abs" style="left:32px;top:20px;width:25px;height:5px;background:repeating-linear-gradient(90deg,#3c3c3c 0 1px,transparent 1px 3px)"></div>
<div class="abs" style="left:8px;top:462px;width:74px;height:1px;background:#484848"></div>
<div class="abs" style="left:31px;top:492px;width:44px;height:44px;background:#000;border:1px solid #e8e8e8"></div>
<div class="abs" style="left:42px;top:503px;width:22px;height:22px;background:#535353;border:1px solid #e8e8e8"></div>
<div class="abs" style="left:9px;top:469px;width:44px;height:44px;background:#f6e814;border:1px solid #e0e0e0"></div>
<svg class="abs" style="left:62px;top:468px" width="16" height="16" viewBox="0 0 16 16"><path d="M3 5 C7 3 11 5 11.500 10" fill="none" stroke="#c4c4c4" stroke-width="2"/><path d="M1 5 L6 1.500 V8.500 Z M8 9.500 H15 L11.500 14.500 Z" fill="#c4c4c4"/></svg>
<div class="abs" style="left:13px;top:525px;width:9px;height:9px;background:#000;border:1px solid #e0e0e0"></div>
<div class="abs" style="left:9px;top:521px;width:9px;height:9px;background:#fff;border:1px solid #222"></div>
<div class="abs" style="left:8px;top:545px;width:73px;height:24px;border:1px solid #5d5d5d;border-radius:3px"></div>
<div class="abs" style="left:8px;top:545px;width:24px;height:24px;background:#2e2e2e;border-radius:3px 0 0 3px"></div>
<div class="abs" style="left:32px;top:546px;width:1px;height:22px;background:#5d5d5d"></div><div class="abs" style="left:56px;top:546px;width:1px;height:22px;background:#5d5d5d"></div>
<div class="abs" style="left:12px;top:549px;width:15px;height:15px;background:#f6e814;border:1px solid #111"></div>
<div class="abs" style="left:37px;top:549px;width:15px;height:15px;background:linear-gradient(90deg,#f0f0f0,#333);border:1px solid #111"></div>
<div class="abs" style="left:62px;top:549px;width:15px;height:15px;background:linear-gradient(135deg,#fff 0 42%,#e01b24 42% 58%,#fff 58%);border:1px solid #111"></div>
<div class="abs" style="left:8px;top:575px;width:73px;height:24px;border:1px solid #5d5d5d;border-radius:3px"></div>
<div class="abs" style="left:8px;top:575px;width:24px;height:24px;background:#2e2e2e;border-radius:3px 0 0 3px"></div>
<div class="abs" style="left:56px;top:576px;width:1px;height:22px;background:#5d5d5d"></div>
<svg class="abs" style="left:11px;top:579px" width="18" height="17" viewBox="0 0 18 17"><circle cx="7" cy="7" r="5.500" fill="#9a9a9a" stroke="#c4c4c4" stroke-width="1"/><rect x="8.500" y="8.500" width="7" height="7" rx="1" fill="#d0d0d0"/></svg>
<svg class="abs" style="left:36px;top:579px" width="18" height="17" viewBox="0 0 18 17"><rect x="8.500" y="8.500" width="7" height="7" rx="1" fill="#d0d0d0"/><circle cx="7" cy="7" r="5.500" fill="#535353" stroke="#c4c4c4" stroke-width="1.200"/></svg>
<svg class="abs" style="left:60px;top:579px" width="18" height="17" viewBox="0 0 18 17"><circle cx="8" cy="8" r="5.500" fill="none" stroke="#686868" stroke-width="1.200"/><path d="M8 8 H12 A4 4 0 0 1 8 12 Z" fill="#686868"/></svg>
<svg class="abs" style="left:30px;top:606px" width="30" height="24" viewBox="0 0 30 24"><rect x="10.500" y="2.500" width="17" height="12" fill="#6c6c6c" stroke="#c4c4c4" stroke-width="1.400"/><rect x="1.500" y="8.500" width="17" height="12" fill="#6c6c6c" stroke="#c4c4c4" stroke-width="1.400"/></svg>
<div class="abs" style="left:37px;top:656px;width:4px;height:4px;border-radius:50%;background:#c4c4c4"></div>
<div class="abs" style="left:43px;top:656px;width:4px;height:4px;border-radius:50%;background:#c4c4c4"></div>
<div class="abs" style="left:49px;top:656px;width:4px;height:4px;border-radius:50%;background:#c4c4c4"></div>
<div class="abs" style="left:0;top:676px;width:90px;height:1px;background:#484848"></div>
</div><!--LT1--><div id="ltoolhead"><svg class="abs" style="left:9px;top:4px" width="8" height="6" viewBox="0 0 8 6"><path d="M3 0.500 L0.800 2.800 L3 5 M6.800 0.500 L4.600 2.800 L6.800 5" fill="none" stroke="#d8d8d8" stroke-width="1.300"/></svg></div><div id="lgap"></div>
<!--RPANEL-->
<div id="rgap"></div><!--RP0--><div id="rpanel"><style>#rpanel .t{font-size:13px;color:#c8c8c8;letter-spacing:-0.3px}</style>
<div class="abs" style="left:0px;top:0px;width:289px;height:14px;background:#474747"></div>
<div class="abs" style="left:0px;top:14px;width:289px;height:1px;background:#2f2f2f"></div>
<svg class="abs" style="left:271px;top:4px" width="8" height="6" viewBox="0 0 8 6"><path d="M1 0.500 L3.200 2.800 L1 5 M4.800 0.500 L7 2.800 L4.800 5" fill="none" stroke="#d8d8d8" stroke-width="1.300"/></svg>
<div class="abs" style="left:0px;top:15px;width:289px;height:33px;background:#424242"></div>
<div class="abs" style="left:0px;top:48px;width:289px;height:1px;background:#3a3a3a"></div>
<div class="abs" style="left:169px;top:15px;width:69px;height:34px;background:#535353"></div>
<div class="abs" style="left:50px;top:16px;width:1px;height:32px;background:#3a3a3a"></div>
<div class="abs" style="left:122px;top:16px;width:1px;height:32px;background:#3a3a3a"></div>
<div class="abs" style="left:168px;top:16px;width:1px;height:32px;background:#3a3a3a"></div>
<div class="abs" style="left:238px;top:16px;width:1px;height:32px;background:#3a3a3a"></div>
<div class="t" id="r1" style="left:12px;top:25px;color:#b8b8b8;letter-spacing:-0.500px">Layers</div>
<div class="t" id="r2" style="left:62px;top:25px;color:#b8b8b8;letter-spacing:-0.150px">Pathfinder</div>
<div class="t" id="r3" style="left:133px;top:25px;color:#b8b8b8;letter-spacing:-0.400px">Color</div>
<div class="t" id="r4" style="left:187px;top:25px;color:#f2f2f2;font-weight:bold;letter-spacing:-0.500px">Stroke</div>
<svg class="abs" style="left:174px;top:26px" width="7" height="12" viewBox="0 0 7 12"><path d="M1 4.500 L3.500 1.500 L6 4.500 M1 7.500 L3.500 10.500 L6 7.500" fill="none" stroke="#a8a8a8" stroke-width="1.200"/></svg>
<svg class="abs" style="left:266px;top:27px" width="15" height="12" viewBox="0 0 15 12"><path d="M0.500 1.500 H14 M0.500 5.500 H14 M0.500 9.500 H14" stroke="#b8b8b8" stroke-width="1.500"/></svg>
<div class="t" id="r5" style="right:211px;top:62px;">Weight:</div>
<div class="abs" style="left:81px;top:57px;width:109px;height:25px;background:#474747;border:1px solid #5d5d5d;border-radius:3px"></div>
<div class="abs" style="left:103px;top:58px;width:1px;height:23px;background:#5d5d5d"></div>
<div class="abs" style="left:167px;top:58px;width:1px;height:23px;background:#5d5d5d"></div>
<svg class="abs" style="left:87px;top:60px" width="12" height="20" viewBox="0 0 12 20"><path d="M2 6.500 L6 2.500 L10 6.500 M2 13.500 L6 17.500 L10 13.500" fill="none" stroke="#d8d8d8" stroke-width="1.500"/></svg>
<div class="t" style="left:109px;top:62px;color:#e0e0e0">3 pt</div>
<svg class="abs" style="left:172px;top:66px" width="12" height="8" viewBox="0 0 12 8"><path d="M1.500 1.500 L6 6 L10.500 1.500" fill="none" stroke="#e0e0e0" stroke-width="1.800"/></svg>
<div class="t" style="right:211px;top:96px;">Cap:</div>
<div class="abs" style="left:81px;top:90px;width:86px;height:27px;border:1px solid #5d5d5d;border-radius:3px"></div><div class="abs" style="left:82px;top:91px;width:27px;height:25px;background:#2e2e2e;border-radius:2px 0 0 2px"></div><div class="abs" style="left:109px;top:91px;width:1px;height:25px;background:#5d5d5d"></div><div class="abs" style="left:138px;top:91px;width:1px;height:25px;background:#5d5d5d"></div>
<svg class="abs" style="left:86px;top:94px" width="20" height="20" viewBox="0 0 20 20"><rect x="5" y="2" width="11" height="16" fill="#ffffff"/><path d="M3 10 H14" stroke="#2e2e2e" stroke-width="1.600"/><circle cx="5" cy="10" r="2" fill="#2e2e2e" stroke="#ffffff" stroke-width="1"/></svg>
<svg class="abs" style="left:114px;top:94px" width="20" height="20" viewBox="0 0 20 20"><path d="M17 2 H10 A8 8 0 0 0 10 18 H17 Z" fill="#bdbdbd"/><path d="M9 10 H17" stroke="#535353" stroke-width="1.600"/><circle cx="9.500" cy="10" r="1.800" fill="#535353"/></svg>
<svg class="abs" style="left:143px;top:94px" width="20" height="20" viewBox="0 0 20 20"><rect x="2" y="2" width="15" height="16" fill="#bdbdbd"/><path d="M9 10 H17" stroke="#535353" stroke-width="1.600"/><circle cx="9.500" cy="10" r="1.800" fill="#535353"/></svg>
<div class="t" style="right:211px;top:129px;">Corner:</div>
<div class="abs" style="left:81px;top:123px;width:86px;height:27px;border:1px solid #5d5d5d;border-radius:3px"></div><div class="abs" style="left:82px;top:124px;width:27px;height:25px;background:#2e2e2e;border-radius:2px 0 0 2px"></div><div class="abs" style="left:109px;top:124px;width:1px;height:25px;background:#5d5d5d"></div><div class="abs" style="left:138px;top:124px;width:1px;height:25px;background:#5d5d5d"></div>
<svg class="abs" style="left:86px;top:127px" width="20" height="20" viewBox="0 0 20 20"><path d="M2 2 H17 V10 H10 V18 H2 Z" fill="#ffffff"/><path d="M7.500 18 V7.500 H17" stroke="#2e2e2e" stroke-width="1.300" fill="none"/><circle cx="7.500" cy="7.500" r="1.900" fill="#2e2e2e"/></svg>
<svg class="abs" style="left:114px;top:127px" width="20" height="20" viewBox="0 0 20 20"><path d="M17 2 H10 A8 8 0 0 0 2 10 V18 H10 V10 H17 Z" fill="#bdbdbd"/><path d="M7.500 18 V7.500 H17" stroke="#535353" stroke-width="1.300" fill="none"/><circle cx="7.500" cy="7.500" r="1.900" fill="#535353"/></svg>
<svg class="abs" style="left:143px;top:127px" width="20" height="20" viewBox="0 0 20 20"><path d="M17 2 H8 L2 8 V18 H10 V10 H17 Z" fill="#bdbdbd"/><path d="M7.500 18 V7.500 H17" stroke="#535353" stroke-width="1.300" fill="none"/><circle cx="7.500" cy="7.500" r="1.900" fill="#535353"/></svg>
<div class="t" style="left:187px;top:129px;">Limit:</div>
<div class="abs" style="left:223px;top:124px;width:47px;height:25px;background:#474747;border:1px solid #5d5d5d;border-radius:3px"></div>
<div class="t" style="left:229px;top:129px;color:#e0e0e0">2</div>
<div class="t" style="left:275px;top:129px;">x</div>
<div class="t" id="r6" style="right:211px;top:163px;">Align Stroke:</div>
<div class="abs" style="left:81px;top:157px;width:86px;height:27px;border:1px solid #5d5d5d;border-radius:3px"></div><div class="abs" style="left:82px;top:158px;width:27px;height:25px;background:#2e2e2e;border-radius:2px 0 0 2px"></div><div class="abs" style="left:109px;top:158px;width:1px;height:25px;background:#5d5d5d"></div><div class="abs" style="left:138px;top:158px;width:1px;height:25px;background:#5d5d5d"></div>
<svg class="abs" style="left:86px;top:161px" width="20" height="20" viewBox="0 0 20 20"><path d="M2 2 H8 V12 H17 V18 H2 Z" fill="#ffffff"/><path d="M5 2 V15 H17" stroke="#2e2e2e" stroke-width="1.300" fill="none"/><circle cx="5" cy="15" r="1.800" fill="#2e2e2e"/></svg>
<svg class="abs" style="left:114px;top:161px" width="20" height="20" viewBox="0 0 20 20"><path d="M5 2 H10 V12 H17 V16 H5 Z" fill="#bdbdbd"/><path d="M4 2 V17 H17" stroke="#bdbdbd" stroke-width="1.200" fill="none"/><circle cx="4" cy="17" r="1.600" fill="#bdbdbd"/></svg>
<svg class="abs" style="left:143px;top:161px" width="20" height="20" viewBox="0 0 20 20"><path d="M2 2 H8 V12 H17 V18 H2 Z" fill="#bdbdbd"/><path d="M8 2 V12 H17" stroke="#535353" stroke-width="1.300" fill="none"/><circle cx="8" cy="12" r="1.800" fill="#535353"/></svg>
<div class="abs" style="left:7px;top:191px;width:274px;height:1px;background:#484848"></div>
<div class="abs" style="left:7px;top:204px;width:15px;height:15px;background:#d0d0d0;border-radius:2px"></div>
<svg class="abs" style="left:8px;top:205px" width="13" height="13" viewBox="0 0 13 13"><path d="M2.500 6.500 L5.500 9.500 L10.500 3" fill="none" stroke="#444" stroke-width="2"/></svg>
<div class="t" id="r7" style="left:29px;top:203px;color:#ececec">Dashed Line</div>
<div class="abs" style="left:185px;top:199px;width:96px;height:27px;border:1px solid #5d5d5d;border-radius:3px"></div>
<div class="abs" style="left:186px;top:200px;width:46px;height:25px;background:#2e2e2e;border-radius:2px 0 0 2px"></div>
<div class="abs" style="left:232px;top:200px;width:1px;height:25px;background:#5d5d5d"></div>
<svg class="abs" style="left:190px;top:204px" width="38" height="17" viewBox="0 0 38 17"><path d="M2 6 V2 H12 M18 2 H29 M35 1 V9 M2 10 V15 H5 M10 15 H18 M24 15 H35" fill="none" stroke="#fff" stroke-width="1.800"/></svg>
<svg class="abs" style="left:237px;top:204px" width="38" height="17" viewBox="0 0 38 17"><path d="M2 6 V2 H6 M13 2 H24 M31 2 H36 V6 M2 11 V15 H6 M13 15 H24 M31 15 H36 V11" fill="none" stroke="#bdbdbd" stroke-width="1.800"/></svg>
<div class="abs" style="left:7px;top:234px;width:42px;height:25px;background:#474747;border:1px solid #5d5d5d;border-radius:3px;overflow:hidden"></div>
<div class="t" style="left:13px;top:238px;color:#e6e6e6;letter-spacing:0;font-size:13px">290 p</div>
<div class="t" style="left:7px;width:42px;text-align:center;top:262px">dash</div>
<div class="abs" style="left:53px;top:234px;width:42px;height:25px;background:#474747;border:1px solid #5d5d5d;border-radius:3px;overflow:hidden"></div>
<div class="t" style="left:59px;top:238px;color:#e6e6e6;letter-spacing:0;font-size:13px">126 p</div>
<div class="t" style="left:53px;width:42px;text-align:center;top:262px">gap</div>
<div class="abs" style="left:99px;top:234px;width:42px;height:25px;background:#474747;border:1px solid #5d5d5d;border-radius:3px;overflow:hidden"></div>
<div class="t" style="left:105px;top:238px;color:#e6e6e6;letter-spacing:0;font-size:13px">532 p</div>
<div class="t" style="left:99px;width:42px;text-align:center;top:262px">dash</div>
<div class="abs" style="left:146px;top:234px;width:42px;height:25px;background:#474747;border:1px solid #5d5d5d;border-radius:3px;overflow:hidden"></div>
<div class="t" style="left:152px;top:238px;color:#e6e6e6;letter-spacing:0;font-size:13px">145 p</div>
<div class="t" style="left:146px;width:42px;text-align:center;top:262px">gap</div>
<div class="abs" style="left:192px;top:234px;width:42px;height:25px;background:#474747;border:1px solid #5d5d5d;border-radius:3px;overflow:hidden"></div>
<div class="t" style="left:198px;top:238px;color:#e6e6e6;letter-spacing:0;font-size:13px">174 p</div>
<div class="t" style="left:192px;width:42px;text-align:center;top:262px">dash</div>
<div class="abs" style="left:238px;top:234px;width:42px;height:25px;background:#474747;border:1px solid #5d5d5d;border-radius:3px;overflow:hidden"></div>
<div class="t" style="left:244px;top:238px;color:#e6e6e6;letter-spacing:0;font-size:13px">100 p</div>
<div class="t" style="left:238px;width:42px;text-align:center;top:262px">gap</div>
<div class="abs" style="left:7px;top:287px;width:274px;height:1px;background:#484848"></div>
<div class="t" id="r8" style="right:211px;top:301px;">Arrowheads:</div>
<div class="abs" style="left:81px;top:296px;width:71px;height:25px;background:#474747;border:1px solid #5d5d5d;border-radius:3px"></div>
<div class="abs" style="left:82px;top:297px;width:47px;height:23px;background:#e1e1e1"></div>
<div class="abs" style="left:88px;top:307px;width:35px;height:3px;background:#000"></div>
<svg class="abs" style="left:134px;top:305px" width="12" height="8" viewBox="0 0 12 8"><path d="M1.500 1.500 L6 6 L10.500 1.500" fill="none" stroke="#e0e0e0" stroke-width="1.800"/></svg>
<div class="abs" style="left:160px;top:296px;width:71px;height:25px;background:#474747;border:1px solid #5d5d5d;border-radius:3px"></div>
<div class="abs" style="left:161px;top:297px;width:47px;height:23px;background:#e1e1e1"></div>
<div class="abs" style="left:167px;top:307px;width:35px;height:3px;background:#000"></div>
<svg class="abs" style="left:213px;top:305px" width="12" height="8" viewBox="0 0 12 8"><path d="M1.500 1.500 L6 6 L10.500 1.500" fill="none" stroke="#e0e0e0" stroke-width="1.800"/></svg>
<svg class="abs" style="left:257px;top:301px" width="19" height="16" viewBox="0 0 19 16"><path d="M3 4.500 H14 M4 11.500 H16" stroke="#6e6e6e" stroke-width="1.600"/><path d="M12 1 L17 4.500 L12 8 Z M7 8 L2 11.500 L7 15 Z" fill="#6e6e6e"/></svg>
<div class="t" style="right:211px;top:339px;color:#727272">Scale:</div>
<div class="abs" style="left:81px;top:334px;width:71px;height:25px;background:#4e4e4e;border:1px solid #595959;border-radius:3px"></div>
<div class="abs" style="left:103px;top:335px;width:1px;height:23px;background:#595959"></div>
<svg class="abs" style="left:86px;top:337px" width="12" height="20" viewBox="0 0 12 20"><path d="M2 6.500 L6 2.500 L10 6.500 M2 13.500 L6 17.500 L10 13.500" fill="none" stroke="#686868" stroke-width="1.500"/></svg>
<div class="t" style="left:109px;top:339px;color:#6c6c6c">100%</div>
<div class="abs" style="left:160px;top:334px;width:71px;height:25px;background:#4e4e4e;border:1px solid #595959;border-radius:3px"></div>
<div class="abs" style="left:182px;top:335px;width:1px;height:23px;background:#595959"></div>
<svg class="abs" style="left:165px;top:337px" width="12" height="20" viewBox="0 0 12 20"><path d="M2 6.500 L6 2.500 L10 6.500 M2 13.500 L6 17.500 L10 13.500" fill="none" stroke="#686868" stroke-width="1.500"/></svg>
<div class="t" style="left:188px;top:339px;color:#6c6c6c">100%</div>
<svg class="abs" style="left:256px;top:335px" width="20" height="24" viewBox="0 0 20 24"><path d="M6 10 V7 A4 4 0 0 1 14 7 V9 M14 14 V17 A4 4 0 0 1 6 17 V15" fill="none" stroke="#6a6a6a" stroke-width="1.800"/><path d="M2 3 L18 21" stroke="#6a6a6a" stroke-width="1.600"/></svg>
<div class="t" style="right:211px;top:376px;color:#727272">Align:</div>
<div class="abs" style="left:81px;top:370px;width:57px;height:27px;border:1px solid #5d5d5d;border-radius:3px"></div>
<div class="abs" style="left:109px;top:371px;width:1px;height:25px;background:#5d5d5d"></div>
<svg class="abs" style="left:85px;top:375px" width="20" height="17" viewBox="0 0 20 17"><path d="M2 4 H10 V2 M2 11 H13" stroke="#6e6e6e" stroke-width="1.400" fill="none"/><path d="M11 7 L18 11 L11 15 Z" fill="#6e6e6e"/></svg>
<svg class="abs" style="left:114px;top:375px" width="20" height="17" viewBox="0 0 20 17"><path d="M2 4 H17 V2 M2 11 H13" stroke="#6e6e6e" stroke-width="1.400" fill="none"/><path d="M11 7 L18 11 L11 15 Z" fill="#6e6e6e"/></svg>
<div class="abs" style="left:7px;top:403px;width:274px;height:1px;background:#484848"></div>
<div class="t" style="right:211px;top:419px;">Profile:</div>
<div class="abs" style="left:81px;top:414px;width:134px;height:26px;background:#474747;border:1px solid #5d5d5d;border-radius:3px"></div>
<div class="abs" style="left:82px;top:415px;width:109px;height:24px;background:#e1e1e1"></div>
<div class="abs" style="left:89px;top:425px;width:48px;height:3px;background:#000"></div>
<div class="t" style="left:143px;top:420px;color:#111;letter-spacing:-0.200px">Uniform</div>
<svg class="abs" style="left:197px;top:423px" width="12" height="8" viewBox="0 0 12 8"><path d="M1.500 1.500 L6 6 L10.500 1.500" fill="none" stroke="#e0e0e0" stroke-width="1.800"/></svg>
<svg class="abs" style="left:227px;top:418px" width="20" height="18" viewBox="0 0 20 18"><path d="M2 4 L8 9 L2 14 Z M18 4 L12 9 L18 14 Z" fill="none" stroke="#6a6a6a" stroke-width="1.200"/><path d="M10 1 V17" stroke="#6a6a6a" stroke-width="1.200" stroke-dasharray="2 1.500"/></svg>
<svg class="abs" style="left:257px;top:417px" width="18" height="20" viewBox="0 0 18 20"><path d="M4 2 H14 L9 8 Z M4 18 H14 L9 12 Z" fill="#6a6a6a"/><path d="M1 10 H17" stroke="#6a6a6a" stroke-width="1.200" stroke-dasharray="2 1.500"/></svg>
<div class="abs" style="left:0px;top:448px;width:289px;height:2px;background:#3f3f3f"></div>
</div><!--RP1-->
<!--TASKBAR-->
<!--TB0--><div id="taskbar">
<svg class="abs" style="left:28.0px;top:14.0px" width="22" height="22" viewBox="0 0 22 22"><path d="M1 4 L9.500 2.800 V10.300 H1 Z M10.800 2.600 L21 1 V10.300 H10.800 Z M1 11.700 H9.500 V19.200 L1 18 Z M10.800 11.700 H21 V21 L10.800 19.400 Z" fill="#fff"/></svg>
<svg class="abs" style="left:27.0px;top:63.0px" width="24" height="24" viewBox="0 0 24 24"><circle cx="14.500" cy="9.500" r="6.500" fill="none" stroke="#fff" stroke-width="1.600"/><path d="M10 14.500 L2.500 22" stroke="#fff" stroke-width="1.800"/></svg>
<svg class="abs" style="left:24.0px;top:119.0px" width="30" height="26" viewBox="0 0 30 26"><path d="M1 3 H11 L13 5 H29 V24 H1 Z" fill="#f7b92c"/><path d="M1 8 H29 V24 H1 Z" fill="#fcd55f"/><path d="M6 14 H24 V24 H19.500 V18 H10.500 V24 H6 Z" fill="#2f8fe0"/><path d="M1 23 H29 V24 H1 Z" fill="#e0a92a"/></svg>
<svg class="abs" style="left:25.0px;top:178.0px" width="28" height="28" viewBox="0 0 28 28"><circle cx="14" cy="14" r="13.500" fill="#db4437"/><path d="M14 14 L2.300 7.250 A13.500 13.500 0 0 0 14 27.500 L20.500 17.500 Z" fill="#0f9d58"/><path d="M14 14 L14 27.500 A13.500 13.500 0 0 0 25.700 7.250 L14 7.250 Z" fill="#ffcd40"/><path d="M14 0.500 A13.500 13.500 0 0 1 25.700 7.250 H14 L8.150 10.600 L2.300 7.250 A13.500 13.500 0 0 1 14 0.500 Z" fill="#db4437"/><circle cx="14" cy="14" r="6.200" fill="#f1f1f1"/><circle cx="14" cy="14" r="4.900" fill="#4285f4"/></svg>
<svg class="abs" style="left:25.0px;top:235.0px" width="28" height="30" viewBox="0 0 28 30"><path d="M10.500 4 C11 1 17 1 17.500 4 L23 22 H5 Z" fill="#f48b00"/><path d="M10.300 6.500 L17.700 6.500 L18.900 10.500 L9.100 10.500 Z" fill="#f2f2f2"/><path d="M7.900 14.500 L20.100 14.500 L21.600 19.500 L6.400 19.500 Z" fill="#e8e8e8"/><path d="M6 19 L22 19 L23 22 H5 Z" fill="#f2f2f2" opacity="0"/><path d="M3 22 H25 L27 28 H1 Z" fill="#f48b00"/><path d="M7.800 17 L20.200 17 L21.200 20.500 L6.800 20.500 Z" fill="#e9e9e9" opacity="0.200"/></svg>
<svg class="abs" style="left:24.0px;top:294.0px" width="30" height="30" viewBox="0 0 30 30"><defs><radialGradient id="ffg" cx="0.700" cy="0.150" r="1"><stop offset="0" stop-color="#fff36b"/><stop offset="0.350" stop-color="#ff9a1f"/><stop offset="0.700" stop-color="#ff3647"/><stop offset="1" stop-color="#c60084"/></radialGradient></defs><path d="M15 3 C18 3 19 1 20 0.500 C21 3 23 4 25 7 C26.500 5.500 26.500 4 26.500 4 C29 8 30 12 29 17 C27.500 24 22 29 15 29 C7 29 1 23 1 15 C1 11 2.500 8 4 6.500 C4 8 4.500 9 5 9.500 C6 6 10 3 15 3 Z" fill="url(#ffg)"/><circle cx="14.500" cy="16.500" r="7" fill="#7542e5"/><path d="M7 13 C10 10 14 11 16 13 C13 13 11.500 15 12.500 17 C14 20 19 19 20 16 C22 21 18 25 13.500 24.500 C8 24 5.500 18 7 13 Z" fill="#ff7a16" opacity="0.850"/></svg>
<div class="abs" style="left:0;top:340px;width:78px;height:58px;background:#484848"></div>
<div class="abs" style="left:75px;top:340px;width:3px;height:58px;background:#f3d6ae"></div>
<div class="abs" style="left:75px;top:168px;width:3px;height:48px;background:#f3d6ae"></div>
<div class="abs" style="left:26px;top:355px;width:27px;height:26px;background:#2e0f00;border:2px solid #ff7c00;color:#ff7c00;font-weight:bold;font-size:17px;line-height:21px;text-align:center;letter-spacing:-0.5px">Ai</div>
<div class="abs" style="left:26px;top:414px;width:27px;height:26px;background:#2a0a35;border:2px solid #d291ff;color:#d291ff;font-weight:bold;font-size:16px;line-height:21px;text-align:center;letter-spacing:-0.5px">Ch</div>
<div class="abs" style="left:26px;top:473px;width:27px;height:26px;background:#2a0a35;border:2px solid #e27cf5;color:#e27cf5;font-weight:bold;font-size:16px;line-height:21px;text-align:center;letter-spacing:-0.5px">Pr</div>
<svg class="abs" style="left:15.0px;top:867.0px" width="12" height="18" viewBox="0 0 12 18"><path d="M9.500 1.500 L2.500 9 L9.500 16.500" fill="none" stroke="#fff" stroke-width="1.400"/></svg>
<svg class="abs" style="left:9.0px;top:898.0px" width="20" height="16" viewBox="0 0 20 16"><path d="M1.500 5.500 H4.500 L8 2 V14 L4.500 10.500 H1.500 Z" fill="none" stroke="#fff" stroke-width="1.200"/><path d="M11.500 4.500 L18 11.500 M18 4.500 L11.500 11.500" stroke="#fff" stroke-width="1.200"/></svg>
<svg class="abs" style="left:41.0px;top:900.0px" width="20" height="12" viewBox="0 0 20 12"><rect x="1" y="1.500" width="16" height="9" fill="none" stroke="#fff" stroke-width="1.300"/><rect x="2.800" y="3.300" width="9" height="5.400" fill="#fff"/><rect x="17.500" y="4.500" width="1.800" height="3" fill="#fff"/></svg>
<svg class="abs" style="left:14.0px;top:930.0px" width="18" height="16" viewBox="0 0 18 16"><path d="M2 15 A13 13 0 0 1 15 2" fill="none" stroke="#fff" stroke-width="1.200"/><path d="M6 15 A9 9 0 0 1 15 6" fill="none" stroke="#fff" stroke-width="1.200"/><path d="M10 15 A5 5 0 0 1 15 10" fill="none" stroke="#fff" stroke-width="1.200"/><circle cx="14.500" cy="14.500" r="1.500" fill="#fff"/></svg>
<div class="t" id="k1" style="left:0;width:78px;text-align:center;top:969px;color:#fff;font-size:14.500px;letter-spacing:-0.300px">8:18 PM</div>
<div class="t" id="k2" style="left:0;width:78px;text-align:center;top:991px;color:#fff;font-size:14.500px;letter-spacing:0.350px">2/6/2020</div>
<svg class="abs" style="left:26.5px;top:1032.0px" width="32" height="34" viewBox="0 0 32 34"><path d="M3 2 H23 V18 H11 V22 L7 18 H3 Z" fill="#fff"/><path d="M6.500 6.500 H19.500 M6.500 10 H19.500 M6.500 13.500 H19.500" stroke="#1b1b1b" stroke-width="1.200"/><circle cx="22" cy="22" r="9" fill="#2a2a2a" stroke="#7a7a7a" stroke-width="1"/></svg>
<div class="t" style="left:43.5px;top:1047px;color:#fff;font-size:12px;font-weight:bold">3</div>
<div class="abs" style="left:0;top:1073px;width:78px;height:1px;background:#8a8a8a"></div>
</div><!--TB1-->
</body></html>
